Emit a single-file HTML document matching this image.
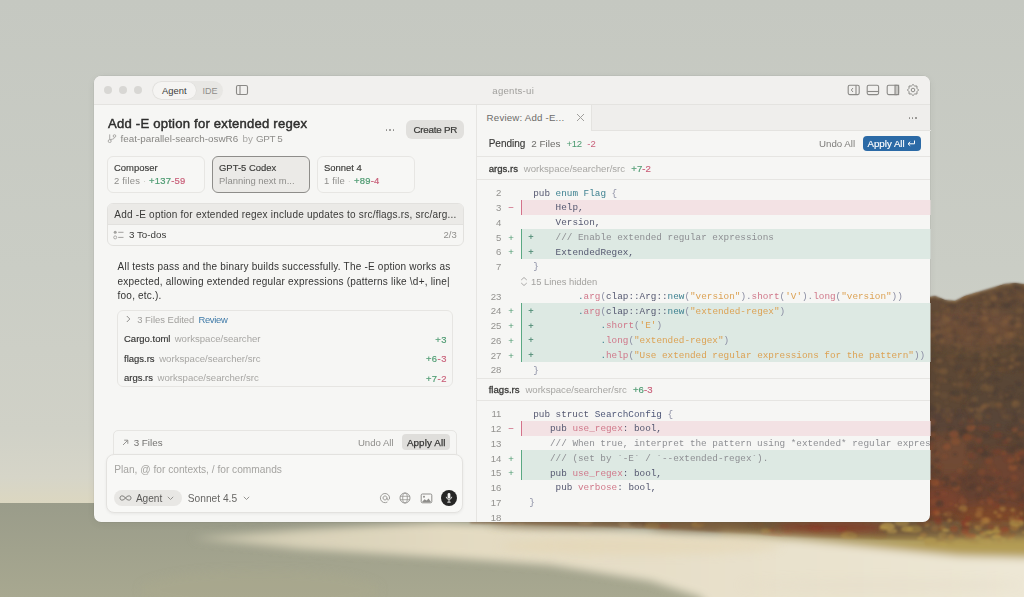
<!DOCTYPE html>
<html><head><meta charset="utf-8"><title>agents-ui</title>
<style>
html,body{margin:0;padding:0;width:1024px;height:597px;overflow:hidden;background:#c9ccc5;}
body{position:relative;font-family:"Liberation Sans", sans-serif;}
.t{position:absolute;white-space:pre;line-height:1;}
.b{position:absolute;}
.win{position:absolute;background:#f6f6f4;border-radius:7px;box-shadow:0 0 0 0.5px rgba(0,0,0,0.08),0 2px 8px rgba(0,0,0,0.06);}
.clip{position:absolute;left:95px;top:76px;width:835.5px;height:446px;border-radius:8px;overflow:hidden;}
</style></head><body>

<svg class="b" style="left:0;top:0" width="1024" height="597" viewBox="0 0 1024 597">
<defs>
<linearGradient id="sky" x1="0" y1="0" x2="0" y2="597" gradientUnits="userSpaceOnUse">
<stop offset="0" stop-color="#c5c8c1"/>
<stop offset="0.45" stop-color="#cacdc5"/>
<stop offset="0.72" stop-color="#d0d1c7"/>
<stop offset="0.8" stop-color="#d6d5c8"/>
<stop offset="0.845" stop-color="#dcd7c0"/>
</linearGradient>
<linearGradient id="gnd" x1="0" y1="503" x2="0" y2="597" gradientUnits="userSpaceOnUse">
<stop offset="0" stop-color="#9a9c8a"/>
<stop offset="0.5" stop-color="#a1a28d"/>
<stop offset="1" stop-color="#a8a890"/>
</linearGradient>
<linearGradient id="tree" x1="0" y1="284" x2="0" y2="545" gradientUnits="userSpaceOnUse">
<stop offset="0" stop-color="#654d38"/>
<stop offset="0.25" stop-color="#5d4836"/>
<stop offset="0.55" stop-color="#5a4537"/>
<stop offset="0.8" stop-color="#654331"/>
<stop offset="1" stop-color="#72452c"/>
</linearGradient>
<linearGradient id="sand" x1="208" y1="0" x2="1024" y2="0" gradientUnits="userSpaceOnUse">
<stop offset="0" stop-color="#c9c5ac"/>
<stop offset="0.12" stop-color="#d8d1b8"/>
<stop offset="0.3" stop-color="#e3dac1"/>
<stop offset="1" stop-color="#ede7d5"/>
</linearGradient>
<clipPath id="treeclip"><polygon points="925,298 935,296 945,300 955,301 965,296 975,293 985,290 995,287 1005,284 1015,283 1030,285 1040,285 1040,560 925,560"/><polygon points="470,521 1040,521 1040,560 950,545 880,540 800,538 740,534 680,530 600,527 520,525 470,524"/></clipPath>
<filter id="bl1" x="-5%" y="-5%" width="110%" height="110%"><feGaussianBlur stdDeviation="1.0"/></filter>
<filter id="bl" x="-5%" y="-5%" width="110%" height="110%"><feGaussianBlur stdDeviation="1.2"/></filter>
<filter id="bl3" x="-20%" y="-50%" width="140%" height="200%"><feGaussianBlur stdDeviation="4.5"/></filter>
<filter id="bl2" x="-50%" y="-50%" width="200%" height="200%"><feGaussianBlur stdDeviation="4"/></filter>
</defs>
<rect x="0" y="0" width="1024" height="597" fill="url(#sky)"/>
<rect x="-20" y="503" width="1064" height="120" fill="url(#gnd)"/>
<g filter="url(#bl)">
<polygon points="925,298 935,296 945,300 955,301 965,296 975,293 985,290 995,287 1005,284 1015,283 1030,285 1040,285 1040,560 925,560" fill="url(#tree)"/>
<polygon points="470,521 930,521 1040,521 1040,545 950,542 880,540 800,538 740,534 680,530 600,527 520,525 470,524" fill="#735a3e"/>
</g>
<g filter="url(#bl2)">
<ellipse cx="975" cy="330" rx="45" ry="22" fill="#74523a" opacity="0.6"/>
<ellipse cx="1000" cy="400" rx="30" ry="30" fill="#56463a" opacity="0.5"/>
<ellipse cx="950" cy="455" rx="25" ry="22" fill="#7d4e33" opacity="0.55"/>
<ellipse cx="1005" cy="470" rx="25" ry="20" fill="#7a4630" opacity="0.5"/>
<ellipse cx="940" cy="500" rx="22" ry="14" fill="#85452c" opacity="0.6"/>
<ellipse cx="990" cy="515" rx="35" ry="12" fill="#8a4a2c" opacity="0.55"/>
<ellipse cx="830" cy="528" rx="55" ry="7" fill="#8c3a28" opacity="0.7"/>
</g>
<g filter="url(#bl1)" clip-path="url(#treeclip)"><ellipse cx="957.0" cy="322.1" rx="3.5" ry="2.8" fill="#7a5a3a" opacity="0.50"/><ellipse cx="932.2" cy="437.0" rx="4.2" ry="3.4" fill="#4f3a2e" opacity="0.26"/><ellipse cx="968.8" cy="300.6" rx="1.8" ry="1.4" fill="#4a3c34" opacity="0.27"/><ellipse cx="983.1" cy="534.0" rx="3.4" ry="2.7" fill="#c09a48" opacity="0.53"/><ellipse cx="984.3" cy="387.5" rx="4.4" ry="3.5" fill="#7a5a3a" opacity="0.42"/><ellipse cx="936.4" cy="393.5" rx="3.1" ry="2.5" fill="#86603c" opacity="0.34"/><ellipse cx="1010.1" cy="330.1" rx="3.2" ry="2.6" fill="#4f3e32" opacity="0.36"/><ellipse cx="981.2" cy="298.7" rx="1.7" ry="1.3" fill="#4f3e32" opacity="0.40"/><ellipse cx="979.4" cy="488.7" rx="2.9" ry="2.3" fill="#9a5530" opacity="0.36"/><ellipse cx="948.8" cy="329.8" rx="3.8" ry="3.1" fill="#7a5a3a" opacity="0.42"/><ellipse cx="978.7" cy="514.8" rx="3.7" ry="3.0" fill="#b07a3a" opacity="0.43"/><ellipse cx="929.9" cy="418.2" rx="2.0" ry="1.6" fill="#6e4e34" opacity="0.30"/><ellipse cx="974.8" cy="292.4" rx="3.5" ry="2.8" fill="#86603c" opacity="0.42"/><ellipse cx="1016.6" cy="365.5" rx="3.6" ry="2.9" fill="#86603c" opacity="0.40"/><ellipse cx="1008.1" cy="300.3" rx="1.8" ry="1.4" fill="#6e4e34" opacity="0.39"/><ellipse cx="993.7" cy="298.1" rx="3.6" ry="2.9" fill="#86603c" opacity="0.55"/><ellipse cx="1010.8" cy="357.7" rx="2.7" ry="2.1" fill="#6e4e34" opacity="0.26"/><ellipse cx="971.9" cy="326.7" rx="1.9" ry="1.5" fill="#7a5a3a" opacity="0.32"/><ellipse cx="953.0" cy="478.4" rx="2.7" ry="2.2" fill="#9a5530" opacity="0.27"/><ellipse cx="970.5" cy="428.2" rx="4.2" ry="3.3" fill="#9a5530" opacity="0.51"/><ellipse cx="952.1" cy="392.5" rx="2.6" ry="2.1" fill="#4a3c34" opacity="0.54"/><ellipse cx="938.3" cy="328.9" rx="2.2" ry="1.8" fill="#4f3e32" opacity="0.25"/><ellipse cx="1011.8" cy="330.5" rx="2.3" ry="1.9" fill="#4f3e32" opacity="0.38"/><ellipse cx="961.9" cy="432.6" rx="4.4" ry="3.5" fill="#4a3a32" opacity="0.54"/><ellipse cx="992.7" cy="478.8" rx="2.9" ry="2.3" fill="#4a3a32" opacity="0.37"/><ellipse cx="965.1" cy="309.5" rx="3.4" ry="2.7" fill="#7a5a3a" opacity="0.31"/><ellipse cx="1028.3" cy="399.2" rx="1.8" ry="1.5" fill="#86603c" opacity="0.27"/><ellipse cx="922.0" cy="322.2" rx="1.8" ry="1.4" fill="#6e4e34" opacity="0.43"/><ellipse cx="929.6" cy="337.3" rx="2.6" ry="2.1" fill="#6e4e34" opacity="0.54"/><ellipse cx="987.0" cy="408.1" rx="1.8" ry="1.5" fill="#4a3c34" opacity="0.55"/><ellipse cx="972.3" cy="410.7" rx="1.8" ry="1.4" fill="#7a5a3a" opacity="0.47"/><ellipse cx="1002.0" cy="409.3" rx="3.6" ry="2.9" fill="#86603c" opacity="0.26"/><ellipse cx="1024.7" cy="422.5" rx="1.9" ry="1.6" fill="#4a3a32" opacity="0.52"/><ellipse cx="1003.9" cy="361.3" rx="3.4" ry="2.7" fill="#7a5a3a" opacity="0.46"/><ellipse cx="950.2" cy="379.5" rx="2.0" ry="1.6" fill="#4f3e32" opacity="0.41"/><ellipse cx="1006.1" cy="369.7" rx="2.2" ry="1.7" fill="#4f3e32" opacity="0.49"/><ellipse cx="1010.4" cy="478.8" rx="2.2" ry="1.7" fill="#4a3a32" opacity="0.40"/><ellipse cx="1000.9" cy="545.2" rx="3.9" ry="3.1" fill="#6a4030" opacity="0.33"/><ellipse cx="996.8" cy="536.4" rx="2.8" ry="2.3" fill="#b07a3a" opacity="0.54"/><ellipse cx="961.4" cy="340.6" rx="2.2" ry="1.7" fill="#4f3e32" opacity="0.35"/><ellipse cx="974.1" cy="544.1" rx="3.3" ry="2.7" fill="#9a4a2c" opacity="0.39"/><ellipse cx="992.5" cy="494.7" rx="1.8" ry="1.4" fill="#8a4a2e" opacity="0.52"/><ellipse cx="1006.5" cy="481.5" rx="2.9" ry="2.3" fill="#4f3a2e" opacity="0.38"/><ellipse cx="990.7" cy="305.1" rx="4.3" ry="3.5" fill="#4a3c34" opacity="0.39"/><ellipse cx="1002.3" cy="304.6" rx="2.0" ry="1.6" fill="#4f3e32" opacity="0.26"/><ellipse cx="985.8" cy="405.8" rx="3.5" ry="2.8" fill="#86603c" opacity="0.50"/><ellipse cx="1027.9" cy="456.8" rx="2.6" ry="2.0" fill="#4a3a32" opacity="0.41"/><ellipse cx="924.3" cy="494.6" rx="3.7" ry="2.9" fill="#8a4a2e" opacity="0.41"/><ellipse cx="1022.8" cy="397.4" rx="4.1" ry="3.3" fill="#4f3e32" opacity="0.26"/><ellipse cx="945.0" cy="415.3" rx="3.8" ry="3.0" fill="#6e4e34" opacity="0.33"/><ellipse cx="967.3" cy="316.9" rx="4.2" ry="3.4" fill="#6e4e34" opacity="0.52"/><ellipse cx="993.5" cy="498.8" rx="3.1" ry="2.4" fill="#4a3a32" opacity="0.29"/><ellipse cx="938.4" cy="417.8" rx="4.1" ry="3.3" fill="#4f3e32" opacity="0.43"/><ellipse cx="1005.8" cy="321.8" rx="1.9" ry="1.5" fill="#86603c" opacity="0.47"/><ellipse cx="982.1" cy="368.7" rx="3.1" ry="2.4" fill="#86603c" opacity="0.39"/><ellipse cx="1005.9" cy="516.9" rx="1.7" ry="1.3" fill="#8c3a28" opacity="0.33"/><ellipse cx="1005.4" cy="417.1" rx="3.2" ry="2.5" fill="#7a5a3a" opacity="0.38"/><ellipse cx="988.2" cy="416.5" rx="3.0" ry="2.4" fill="#6e4e34" opacity="0.39"/><ellipse cx="979.6" cy="409.2" rx="4.3" ry="3.5" fill="#86603c" opacity="0.51"/><ellipse cx="1023.8" cy="351.1" rx="3.2" ry="2.5" fill="#4f3e32" opacity="0.50"/><ellipse cx="936.8" cy="314.4" rx="2.8" ry="2.3" fill="#7a5a3a" opacity="0.45"/><ellipse cx="968.3" cy="338.6" rx="2.4" ry="1.9" fill="#7a5a3a" opacity="0.52"/><ellipse cx="938.7" cy="472.5" rx="3.5" ry="2.8" fill="#4f3a2e" opacity="0.33"/><ellipse cx="936.8" cy="406.4" rx="3.7" ry="3.0" fill="#7a5a3a" opacity="0.37"/><ellipse cx="974.6" cy="545.3" rx="4.0" ry="3.2" fill="#8c3a28" opacity="0.46"/><ellipse cx="1029.4" cy="389.4" rx="2.8" ry="2.2" fill="#6e4e34" opacity="0.35"/><ellipse cx="1000.0" cy="287.2" rx="3.2" ry="2.5" fill="#4a3c34" opacity="0.46"/><ellipse cx="963.5" cy="419.6" rx="2.4" ry="1.9" fill="#7a5a3a" opacity="0.28"/><ellipse cx="1021.2" cy="342.8" rx="4.1" ry="3.3" fill="#7a5a3a" opacity="0.33"/><ellipse cx="926.3" cy="489.2" rx="2.3" ry="1.8" fill="#4f3a2e" opacity="0.50"/><ellipse cx="1013.8" cy="461.8" rx="4.3" ry="3.5" fill="#9a5530" opacity="0.29"/><ellipse cx="1021.3" cy="433.8" rx="3.6" ry="2.9" fill="#8a4a2e" opacity="0.33"/><ellipse cx="1008.4" cy="330.8" rx="4.2" ry="3.3" fill="#6e4e34" opacity="0.53"/><ellipse cx="990.5" cy="495.2" rx="1.8" ry="1.4" fill="#4f3a2e" opacity="0.27"/><ellipse cx="1015.2" cy="402.7" rx="2.5" ry="2.0" fill="#86603c" opacity="0.38"/><ellipse cx="1020.9" cy="447.4" rx="1.6" ry="1.3" fill="#4f3a2e" opacity="0.53"/><ellipse cx="1026.7" cy="351.7" rx="2.0" ry="1.6" fill="#6e4e34" opacity="0.44"/><ellipse cx="979.4" cy="336.8" rx="2.8" ry="2.3" fill="#4f3e32" opacity="0.33"/><ellipse cx="1008.8" cy="546.5" rx="1.6" ry="1.3" fill="#9a4a2c" opacity="0.47"/><ellipse cx="981.5" cy="332.4" rx="2.9" ry="2.3" fill="#4a3c34" opacity="0.28"/><ellipse cx="1010.4" cy="397.0" rx="3.0" ry="2.4" fill="#4a3c34" opacity="0.54"/><ellipse cx="955.2" cy="339.2" rx="2.2" ry="1.8" fill="#4f3e32" opacity="0.50"/><ellipse cx="998.3" cy="451.2" rx="2.7" ry="2.2" fill="#7a402c" opacity="0.54"/><ellipse cx="1012.4" cy="285.8" rx="3.4" ry="2.7" fill="#6e4e34" opacity="0.38"/><ellipse cx="928.0" cy="459.0" rx="2.6" ry="2.1" fill="#4a3a32" opacity="0.45"/><ellipse cx="952.4" cy="346.4" rx="2.4" ry="1.9" fill="#4a3c34" opacity="0.31"/><ellipse cx="951.1" cy="283.0" rx="2.6" ry="2.1" fill="#6e4e34" opacity="0.54"/><ellipse cx="981.1" cy="347.0" rx="4.4" ry="3.5" fill="#6e4e34" opacity="0.32"/><ellipse cx="941.8" cy="371.2" rx="1.8" ry="1.4" fill="#6e4e34" opacity="0.40"/><ellipse cx="943.7" cy="416.3" rx="1.5" ry="1.2" fill="#6e4e34" opacity="0.50"/><ellipse cx="937.5" cy="438.1" rx="2.7" ry="2.1" fill="#7a402c" opacity="0.34"/><ellipse cx="947.1" cy="437.8" rx="3.1" ry="2.5" fill="#4f3a2e" opacity="0.45"/><ellipse cx="999.3" cy="515.8" rx="2.7" ry="2.1" fill="#b07a3a" opacity="0.47"/><ellipse cx="975.4" cy="357.6" rx="3.4" ry="2.7" fill="#4f3e32" opacity="0.26"/><ellipse cx="1012.2" cy="519.3" rx="3.4" ry="2.7" fill="#c09a48" opacity="0.29"/><ellipse cx="978.6" cy="416.2" rx="4.0" ry="3.2" fill="#7a5a3a" opacity="0.50"/><ellipse cx="985.1" cy="519.5" rx="3.5" ry="2.8" fill="#8c3a28" opacity="0.28"/><ellipse cx="926.5" cy="451.5" rx="4.4" ry="3.5" fill="#9a5530" opacity="0.50"/><ellipse cx="982.3" cy="449.0" rx="3.4" ry="2.7" fill="#4f3a2e" opacity="0.40"/><ellipse cx="922.4" cy="494.2" rx="3.7" ry="3.0" fill="#4a3a32" opacity="0.52"/><ellipse cx="931.9" cy="421.9" rx="3.7" ry="3.0" fill="#9a5530" opacity="0.33"/><ellipse cx="930.0" cy="352.6" rx="3.7" ry="3.0" fill="#4f3e32" opacity="0.32"/><ellipse cx="992.2" cy="404.5" rx="4.0" ry="3.2" fill="#7a5a3a" opacity="0.39"/><ellipse cx="995.8" cy="486.0" rx="3.4" ry="2.7" fill="#4f3a2e" opacity="0.27"/><ellipse cx="937.9" cy="349.5" rx="3.7" ry="3.0" fill="#6e4e34" opacity="0.44"/><ellipse cx="936.4" cy="410.3" rx="3.0" ry="2.4" fill="#7a5a3a" opacity="0.46"/><ellipse cx="995.0" cy="359.4" rx="3.0" ry="2.4" fill="#4a3c34" opacity="0.39"/><ellipse cx="1004.9" cy="546.2" rx="3.1" ry="2.5" fill="#b07a3a" opacity="0.54"/><ellipse cx="1023.1" cy="286.7" rx="2.9" ry="2.3" fill="#86603c" opacity="0.54"/><ellipse cx="970.5" cy="353.5" rx="2.1" ry="1.7" fill="#4f3e32" opacity="0.27"/><ellipse cx="931.8" cy="480.8" rx="2.3" ry="1.8" fill="#7a402c" opacity="0.29"/><ellipse cx="1010.6" cy="417.3" rx="4.2" ry="3.3" fill="#6e4e34" opacity="0.32"/><ellipse cx="1019.0" cy="411.3" rx="1.6" ry="1.3" fill="#7a5a3a" opacity="0.53"/><ellipse cx="995.6" cy="389.8" rx="3.7" ry="2.9" fill="#4a3c34" opacity="0.35"/><ellipse cx="956.1" cy="505.5" rx="1.5" ry="1.2" fill="#b07a3a" opacity="0.50"/><ellipse cx="935.0" cy="528.4" rx="3.6" ry="2.9" fill="#b07a3a" opacity="0.33"/><ellipse cx="929.0" cy="385.8" rx="4.1" ry="3.3" fill="#7a5a3a" opacity="0.36"/><ellipse cx="968.2" cy="355.2" rx="1.6" ry="1.3" fill="#7a5a3a" opacity="0.27"/><ellipse cx="993.5" cy="450.9" rx="1.9" ry="1.6" fill="#7a402c" opacity="0.38"/><ellipse cx="956.1" cy="487.7" rx="3.9" ry="3.1" fill="#9a5530" opacity="0.52"/><ellipse cx="1009.7" cy="449.8" rx="4.2" ry="3.4" fill="#4a3a32" opacity="0.41"/><ellipse cx="999.7" cy="295.2" rx="3.7" ry="3.0" fill="#4a3c34" opacity="0.43"/><ellipse cx="937.0" cy="513.3" rx="3.0" ry="2.4" fill="#c09a48" opacity="0.29"/><ellipse cx="973.0" cy="373.4" rx="2.4" ry="1.9" fill="#6e4e34" opacity="0.37"/><ellipse cx="947.8" cy="410.5" rx="3.5" ry="2.8" fill="#7a5a3a" opacity="0.30"/><ellipse cx="939.5" cy="337.3" rx="4.2" ry="3.4" fill="#4a3c34" opacity="0.42"/><ellipse cx="970.9" cy="370.5" rx="3.8" ry="3.0" fill="#4a3c34" opacity="0.29"/><ellipse cx="942.8" cy="306.1" rx="2.5" ry="2.0" fill="#7a5a3a" opacity="0.35"/><ellipse cx="961.8" cy="497.3" rx="2.1" ry="1.7" fill="#8a4a2e" opacity="0.47"/><ellipse cx="966.6" cy="392.1" rx="3.1" ry="2.5" fill="#4a3c34" opacity="0.33"/><ellipse cx="1003.2" cy="414.5" rx="3.2" ry="2.6" fill="#6e4e34" opacity="0.29"/><ellipse cx="976.4" cy="449.5" rx="4.1" ry="3.3" fill="#4f3a2e" opacity="0.28"/><ellipse cx="1018.9" cy="384.3" rx="3.4" ry="2.7" fill="#4a3c34" opacity="0.54"/><ellipse cx="1013.7" cy="514.2" rx="1.6" ry="1.3" fill="#9a4a2c" opacity="0.38"/><ellipse cx="1004.5" cy="495.9" rx="4.4" ry="3.5" fill="#9a5530" opacity="0.25"/><ellipse cx="964.3" cy="528.5" rx="4.0" ry="3.2" fill="#6a4030" opacity="0.54"/><ellipse cx="948.8" cy="311.0" rx="2.0" ry="1.6" fill="#86603c" opacity="0.54"/><ellipse cx="933.8" cy="501.6" rx="3.6" ry="2.9" fill="#9a5530" opacity="0.28"/><ellipse cx="1005.9" cy="282.4" rx="1.9" ry="1.5" fill="#86603c" opacity="0.53"/><ellipse cx="991.7" cy="362.8" rx="1.9" ry="1.5" fill="#6e4e34" opacity="0.41"/><ellipse cx="969.2" cy="485.2" rx="1.8" ry="1.4" fill="#7a402c" opacity="0.41"/><ellipse cx="985.0" cy="385.2" rx="2.2" ry="1.7" fill="#86603c" opacity="0.25"/><ellipse cx="980.0" cy="547.0" rx="2.3" ry="1.9" fill="#b07a3a" opacity="0.44"/><ellipse cx="1017.4" cy="408.4" rx="2.2" ry="1.8" fill="#4f3e32" opacity="0.26"/><ellipse cx="966.5" cy="454.8" rx="1.7" ry="1.3" fill="#4f3a2e" opacity="0.40"/><ellipse cx="994.8" cy="393.7" rx="2.3" ry="1.8" fill="#4a3c34" opacity="0.53"/><ellipse cx="946.5" cy="291.1" rx="2.5" ry="2.0" fill="#4a3c34" opacity="0.36"/><ellipse cx="964.8" cy="283.8" rx="2.4" ry="1.9" fill="#86603c" opacity="0.27"/><ellipse cx="975.5" cy="335.3" rx="3.8" ry="3.0" fill="#4f3e32" opacity="0.32"/><ellipse cx="945.9" cy="484.3" rx="2.4" ry="1.9" fill="#4a3a32" opacity="0.40"/><ellipse cx="942.2" cy="341.4" rx="2.8" ry="2.2" fill="#7a5a3a" opacity="0.53"/><ellipse cx="937.8" cy="386.7" rx="2.1" ry="1.7" fill="#86603c" opacity="0.29"/><ellipse cx="927.6" cy="298.0" rx="2.7" ry="2.1" fill="#6e4e34" opacity="0.47"/><ellipse cx="1029.7" cy="529.8" rx="2.5" ry="2.0" fill="#8c3a28" opacity="0.45"/><ellipse cx="978.7" cy="406.4" rx="2.4" ry="1.9" fill="#4a3c34" opacity="0.50"/><ellipse cx="1028.4" cy="399.7" rx="1.8" ry="1.5" fill="#7a5a3a" opacity="0.33"/><ellipse cx="960.0" cy="536.2" rx="1.9" ry="1.5" fill="#8c3a28" opacity="0.36"/><ellipse cx="1005.0" cy="364.1" rx="3.9" ry="3.1" fill="#7a5a3a" opacity="0.26"/><ellipse cx="973.1" cy="381.1" rx="4.3" ry="3.4" fill="#4f3e32" opacity="0.35"/><ellipse cx="1001.6" cy="408.2" rx="3.4" ry="2.7" fill="#4f3e32" opacity="0.49"/><ellipse cx="1004.8" cy="292.8" rx="1.6" ry="1.3" fill="#7a5a3a" opacity="0.49"/><ellipse cx="928.7" cy="333.9" rx="1.7" ry="1.4" fill="#86603c" opacity="0.35"/><ellipse cx="951.4" cy="536.7" rx="3.4" ry="2.7" fill="#b07a3a" opacity="0.47"/><ellipse cx="996.5" cy="527.8" rx="2.4" ry="1.9" fill="#c09a48" opacity="0.52"/><ellipse cx="990.5" cy="532.9" rx="1.6" ry="1.3" fill="#8c3a28" opacity="0.28"/><ellipse cx="999.3" cy="405.9" rx="3.8" ry="3.1" fill="#6e4e34" opacity="0.52"/><ellipse cx="1010.0" cy="317.3" rx="3.0" ry="2.4" fill="#7a5a3a" opacity="0.49"/><ellipse cx="1001.8" cy="500.9" rx="3.8" ry="3.1" fill="#4a3a32" opacity="0.32"/><ellipse cx="1015.0" cy="404.6" rx="3.9" ry="3.1" fill="#86603c" opacity="0.27"/><ellipse cx="943.3" cy="482.3" rx="2.2" ry="1.8" fill="#8a4a2e" opacity="0.44"/><ellipse cx="974.0" cy="426.9" rx="2.0" ry="1.6" fill="#9a5530" opacity="0.52"/><ellipse cx="1028.7" cy="352.5" rx="1.8" ry="1.4" fill="#7a5a3a" opacity="0.38"/><ellipse cx="1028.8" cy="540.6" rx="2.0" ry="1.6" fill="#8c3a28" opacity="0.38"/><ellipse cx="989.0" cy="461.3" rx="3.7" ry="3.0" fill="#8a4a2e" opacity="0.48"/><ellipse cx="953.7" cy="356.3" rx="2.3" ry="1.8" fill="#6e4e34" opacity="0.47"/><ellipse cx="943.5" cy="347.8" rx="2.2" ry="1.8" fill="#4f3e32" opacity="0.33"/><ellipse cx="1020.0" cy="332.1" rx="1.7" ry="1.4" fill="#6e4e34" opacity="0.55"/><ellipse cx="976.8" cy="343.5" rx="3.9" ry="3.1" fill="#4a3c34" opacity="0.55"/><ellipse cx="933.1" cy="408.3" rx="4.0" ry="3.2" fill="#4a3c34" opacity="0.52"/><ellipse cx="926.4" cy="360.1" rx="1.9" ry="1.5" fill="#4f3e32" opacity="0.43"/><ellipse cx="1011.4" cy="333.6" rx="1.7" ry="1.4" fill="#86603c" opacity="0.51"/><ellipse cx="970.5" cy="351.1" rx="3.8" ry="3.1" fill="#7a5a3a" opacity="0.28"/><ellipse cx="986.4" cy="446.9" rx="2.2" ry="1.7" fill="#7a402c" opacity="0.35"/><ellipse cx="926.8" cy="548.0" rx="1.6" ry="1.3" fill="#8c3a28" opacity="0.49"/><ellipse cx="1010.4" cy="390.8" rx="2.6" ry="2.1" fill="#86603c" opacity="0.34"/><ellipse cx="944.0" cy="493.5" rx="3.1" ry="2.5" fill="#8a4a2e" opacity="0.37"/><ellipse cx="1008.0" cy="458.6" rx="2.0" ry="1.6" fill="#4a3a32" opacity="0.28"/><ellipse cx="939.7" cy="467.0" rx="2.7" ry="2.2" fill="#7a402c" opacity="0.45"/><ellipse cx="967.1" cy="295.7" rx="3.7" ry="3.0" fill="#6e4e34" opacity="0.37"/><ellipse cx="924.0" cy="485.9" rx="3.9" ry="3.1" fill="#4f3a2e" opacity="0.37"/><ellipse cx="965.7" cy="532.6" rx="2.8" ry="2.2" fill="#8c3a28" opacity="0.38"/><ellipse cx="1010.6" cy="390.1" rx="4.1" ry="3.3" fill="#4a3c34" opacity="0.48"/><ellipse cx="936.0" cy="295.8" rx="1.9" ry="1.5" fill="#4a3c34" opacity="0.28"/><ellipse cx="989.2" cy="380.6" rx="3.0" ry="2.4" fill="#4f3e32" opacity="0.35"/><ellipse cx="939.5" cy="327.7" rx="1.7" ry="1.4" fill="#4a3c34" opacity="0.40"/><ellipse cx="1008.9" cy="539.2" rx="2.1" ry="1.7" fill="#8c3a28" opacity="0.50"/><ellipse cx="926.7" cy="524.8" rx="2.4" ry="2.0" fill="#c09a48" opacity="0.53"/><ellipse cx="963.9" cy="522.5" rx="3.4" ry="2.7" fill="#8c3a28" opacity="0.44"/><ellipse cx="1014.5" cy="447.2" rx="3.3" ry="2.7" fill="#4f3a2e" opacity="0.50"/><ellipse cx="941.8" cy="340.0" rx="2.7" ry="2.2" fill="#86603c" opacity="0.30"/><ellipse cx="960.8" cy="321.8" rx="4.4" ry="3.5" fill="#4f3e32" opacity="0.26"/><ellipse cx="982.7" cy="483.5" rx="1.6" ry="1.3" fill="#7a402c" opacity="0.29"/><ellipse cx="986.7" cy="428.3" rx="3.4" ry="2.7" fill="#7a402c" opacity="0.44"/><ellipse cx="955.3" cy="348.3" rx="2.7" ry="2.1" fill="#6e4e34" opacity="0.38"/><ellipse cx="969.3" cy="288.2" rx="3.4" ry="2.7" fill="#4a3c34" opacity="0.39"/><ellipse cx="970.3" cy="446.5" rx="4.0" ry="3.2" fill="#4f3a2e" opacity="0.49"/><ellipse cx="965.2" cy="299.9" rx="2.6" ry="2.1" fill="#6e4e34" opacity="0.28"/><ellipse cx="969.7" cy="417.7" rx="1.6" ry="1.3" fill="#4f3e32" opacity="0.27"/><ellipse cx="1001.2" cy="488.9" rx="3.0" ry="2.4" fill="#8a4a2e" opacity="0.48"/><ellipse cx="1018.6" cy="455.6" rx="3.9" ry="3.1" fill="#8a4a2e" opacity="0.51"/><ellipse cx="1029.6" cy="476.7" rx="3.9" ry="3.2" fill="#4f3a2e" opacity="0.29"/><ellipse cx="1017.7" cy="358.6" rx="3.9" ry="3.1" fill="#4f3e32" opacity="0.46"/><ellipse cx="999.9" cy="340.8" rx="4.0" ry="3.2" fill="#86603c" opacity="0.48"/><ellipse cx="939.1" cy="520.5" rx="2.3" ry="1.9" fill="#6a4030" opacity="0.29"/><ellipse cx="976.2" cy="526.7" rx="2.1" ry="1.7" fill="#b07a3a" opacity="0.43"/><ellipse cx="947.6" cy="381.0" rx="2.1" ry="1.7" fill="#4a3c34" opacity="0.30"/><ellipse cx="1023.1" cy="462.8" rx="4.2" ry="3.3" fill="#4f3a2e" opacity="0.49"/><ellipse cx="950.5" cy="486.4" rx="1.6" ry="1.3" fill="#7a402c" opacity="0.54"/><ellipse cx="970.9" cy="420.7" rx="3.6" ry="2.9" fill="#8a4a2e" opacity="0.33"/><ellipse cx="979.9" cy="509.9" rx="3.7" ry="3.0" fill="#b07a3a" opacity="0.33"/><ellipse cx="1029.0" cy="435.6" rx="2.6" ry="2.1" fill="#8a4a2e" opacity="0.38"/><ellipse cx="941.1" cy="479.8" rx="1.6" ry="1.3" fill="#4a3a32" opacity="0.33"/><ellipse cx="991.0" cy="543.8" rx="3.3" ry="2.6" fill="#b07a3a" opacity="0.47"/><ellipse cx="1002.7" cy="341.0" rx="2.4" ry="1.9" fill="#4a3c34" opacity="0.38"/><ellipse cx="961.3" cy="294.7" rx="3.0" ry="2.4" fill="#86603c" opacity="0.45"/><ellipse cx="924.4" cy="282.7" rx="2.6" ry="2.1" fill="#7a5a3a" opacity="0.41"/><ellipse cx="979.7" cy="391.9" rx="2.4" ry="1.9" fill="#4f3e32" opacity="0.31"/><ellipse cx="989.4" cy="408.3" rx="1.9" ry="1.5" fill="#4f3e32" opacity="0.46"/><ellipse cx="970.7" cy="298.9" rx="1.9" ry="1.5" fill="#6e4e34" opacity="0.37"/><ellipse cx="950.5" cy="285.1" rx="3.4" ry="2.7" fill="#86603c" opacity="0.52"/><ellipse cx="986.2" cy="435.9" rx="3.3" ry="2.6" fill="#4a3a32" opacity="0.47"/><ellipse cx="948.8" cy="522.3" rx="1.6" ry="1.3" fill="#c09a48" opacity="0.26"/><ellipse cx="942.1" cy="324.4" rx="4.2" ry="3.4" fill="#7a5a3a" opacity="0.25"/><ellipse cx="981.5" cy="532.3" rx="1.9" ry="1.5" fill="#8c3a28" opacity="0.41"/><ellipse cx="991.4" cy="454.3" rx="2.7" ry="2.2" fill="#4a3a32" opacity="0.30"/><ellipse cx="955.4" cy="361.9" rx="1.6" ry="1.3" fill="#4a3c34" opacity="0.46"/><ellipse cx="922.7" cy="506.6" rx="3.7" ry="3.0" fill="#6a4030" opacity="0.27"/><ellipse cx="992.8" cy="328.7" rx="4.5" ry="3.6" fill="#6e4e34" opacity="0.32"/><ellipse cx="926.2" cy="371.2" rx="3.7" ry="3.0" fill="#6e4e34" opacity="0.46"/><ellipse cx="950.7" cy="429.3" rx="2.8" ry="2.2" fill="#4a3a32" opacity="0.54"/><ellipse cx="953.9" cy="529.0" rx="4.2" ry="3.3" fill="#9a4a2c" opacity="0.51"/><ellipse cx="923.6" cy="351.3" rx="2.2" ry="1.8" fill="#4f3e32" opacity="0.53"/><ellipse cx="1002.6" cy="368.9" rx="4.1" ry="3.3" fill="#6e4e34" opacity="0.43"/><ellipse cx="963.0" cy="508.6" rx="4.3" ry="3.4" fill="#c09a48" opacity="0.39"/><ellipse cx="1012.7" cy="467.6" rx="4.1" ry="3.3" fill="#9a5530" opacity="0.54"/><ellipse cx="947.3" cy="517.3" rx="3.9" ry="3.1" fill="#6a4030" opacity="0.44"/><ellipse cx="930.4" cy="524.3" rx="1.9" ry="1.5" fill="#9a4a2c" opacity="0.28"/><ellipse cx="989.2" cy="325.0" rx="4.4" ry="3.5" fill="#7a5a3a" opacity="0.26"/><ellipse cx="936.9" cy="453.2" rx="1.6" ry="1.3" fill="#8a4a2e" opacity="0.47"/><ellipse cx="929.1" cy="439.1" rx="2.6" ry="2.1" fill="#4a3a32" opacity="0.52"/><ellipse cx="929.1" cy="512.8" rx="4.2" ry="3.4" fill="#6a4030" opacity="0.28"/><ellipse cx="944.2" cy="311.8" rx="1.6" ry="1.3" fill="#7a5a3a" opacity="0.50"/><ellipse cx="990.2" cy="358.4" rx="1.8" ry="1.4" fill="#7a5a3a" opacity="0.49"/><ellipse cx="991.8" cy="360.3" rx="2.5" ry="2.0" fill="#6e4e34" opacity="0.26"/><ellipse cx="949.7" cy="357.2" rx="3.6" ry="2.9" fill="#6e4e34" opacity="0.52"/><ellipse cx="1005.1" cy="442.1" rx="2.9" ry="2.3" fill="#7a402c" opacity="0.44"/><ellipse cx="925.3" cy="391.8" rx="2.8" ry="2.2" fill="#7a5a3a" opacity="0.35"/><ellipse cx="998.1" cy="425.1" rx="2.1" ry="1.7" fill="#8a4a2e" opacity="0.42"/><ellipse cx="953.0" cy="398.0" rx="3.1" ry="2.5" fill="#6e4e34" opacity="0.48"/><ellipse cx="1027.6" cy="283.2" rx="3.0" ry="2.4" fill="#4a3c34" opacity="0.46"/><ellipse cx="1011.1" cy="539.3" rx="3.3" ry="2.6" fill="#c09a48" opacity="0.33"/><ellipse cx="1023.9" cy="357.5" rx="2.1" ry="1.7" fill="#4f3e32" opacity="0.40"/><ellipse cx="933.9" cy="451.3" rx="1.7" ry="1.4" fill="#4a3a32" opacity="0.49"/><ellipse cx="989.8" cy="376.6" rx="2.7" ry="2.2" fill="#4a3c34" opacity="0.52"/><ellipse cx="1002.5" cy="394.3" rx="3.4" ry="2.8" fill="#6e4e34" opacity="0.31"/><ellipse cx="950.4" cy="521.7" rx="3.0" ry="2.4" fill="#6a4030" opacity="0.54"/><ellipse cx="990.1" cy="533.1" rx="1.9" ry="1.5" fill="#c09a48" opacity="0.48"/><ellipse cx="1003.3" cy="453.9" rx="2.5" ry="2.0" fill="#7a402c" opacity="0.41"/><ellipse cx="1015.7" cy="401.8" rx="3.2" ry="2.5" fill="#6e4e34" opacity="0.30"/><ellipse cx="969.4" cy="487.7" rx="3.2" ry="2.6" fill="#4f3a2e" opacity="0.35"/><ellipse cx="991.4" cy="467.3" rx="3.0" ry="2.4" fill="#7a402c" opacity="0.34"/><ellipse cx="997.9" cy="506.4" rx="2.0" ry="1.6" fill="#8c3a28" opacity="0.54"/><ellipse cx="1000.1" cy="442.4" rx="2.5" ry="2.0" fill="#4f3a2e" opacity="0.35"/><ellipse cx="942.4" cy="541.4" rx="3.7" ry="2.9" fill="#9a4a2c" opacity="0.30"/><ellipse cx="993.1" cy="334.0" rx="2.0" ry="1.6" fill="#4f3e32" opacity="0.49"/><ellipse cx="1001.2" cy="397.7" rx="2.1" ry="1.7" fill="#7a5a3a" opacity="0.33"/><ellipse cx="1017.6" cy="405.4" rx="1.5" ry="1.2" fill="#4a3c34" opacity="0.46"/><ellipse cx="976.1" cy="450.2" rx="2.9" ry="2.3" fill="#4f3a2e" opacity="0.33"/><ellipse cx="1001.7" cy="283.5" rx="2.2" ry="1.8" fill="#4a3c34" opacity="0.46"/><ellipse cx="985.4" cy="454.2" rx="4.0" ry="3.2" fill="#4a3a32" opacity="0.51"/><ellipse cx="995.4" cy="452.6" rx="2.9" ry="2.3" fill="#7a402c" opacity="0.33"/><ellipse cx="997.7" cy="520.0" rx="2.2" ry="1.8" fill="#6a4030" opacity="0.46"/><ellipse cx="990.0" cy="348.5" rx="2.8" ry="2.2" fill="#4a3c34" opacity="0.26"/><ellipse cx="1014.7" cy="419.9" rx="3.5" ry="2.8" fill="#4f3e32" opacity="0.52"/><ellipse cx="957.4" cy="284.8" rx="4.0" ry="3.2" fill="#7a5a3a" opacity="0.26"/><ellipse cx="980.7" cy="324.8" rx="3.8" ry="3.1" fill="#4f3e32" opacity="0.41"/><ellipse cx="932.9" cy="434.8" rx="3.1" ry="2.5" fill="#9a5530" opacity="0.40"/><ellipse cx="991.0" cy="502.5" rx="3.1" ry="2.5" fill="#9a5530" opacity="0.47"/><ellipse cx="971.3" cy="545.4" rx="2.1" ry="1.6" fill="#c09a48" opacity="0.48"/><ellipse cx="935.2" cy="543.9" rx="2.6" ry="2.1" fill="#9a4a2c" opacity="0.33"/><ellipse cx="963.2" cy="298.4" rx="1.7" ry="1.4" fill="#4a3c34" opacity="0.44"/><ellipse cx="994.9" cy="436.3" rx="1.8" ry="1.5" fill="#7a402c" opacity="0.47"/><ellipse cx="1023.5" cy="422.2" rx="2.2" ry="1.7" fill="#9a5530" opacity="0.39"/><ellipse cx="939.8" cy="529.2" rx="1.7" ry="1.4" fill="#8c3a28" opacity="0.39"/><ellipse cx="982.7" cy="342.1" rx="4.4" ry="3.5" fill="#6e4e34" opacity="0.45"/><ellipse cx="1011.7" cy="493.5" rx="2.7" ry="2.2" fill="#7a402c" opacity="0.48"/><ellipse cx="992.2" cy="489.4" rx="2.9" ry="2.3" fill="#4f3a2e" opacity="0.33"/><ellipse cx="962.6" cy="349.4" rx="2.8" ry="2.2" fill="#4f3e32" opacity="0.39"/><ellipse cx="1009.0" cy="494.5" rx="2.6" ry="2.1" fill="#7a402c" opacity="0.35"/><ellipse cx="974.4" cy="447.8" rx="1.8" ry="1.4" fill="#7a402c" opacity="0.30"/><ellipse cx="954.7" cy="384.4" rx="1.8" ry="1.4" fill="#86603c" opacity="0.52"/><ellipse cx="1006.7" cy="319.3" rx="4.0" ry="3.2" fill="#86603c" opacity="0.25"/><ellipse cx="923.2" cy="535.2" rx="3.5" ry="2.8" fill="#b07a3a" opacity="0.43"/><ellipse cx="984.5" cy="509.2" rx="2.1" ry="1.6" fill="#6a4030" opacity="0.35"/><ellipse cx="938.5" cy="522.5" rx="3.9" ry="3.1" fill="#8c3a28" opacity="0.43"/><ellipse cx="996.3" cy="541.9" rx="1.8" ry="1.4" fill="#c09a48" opacity="0.49"/><ellipse cx="1012.6" cy="334.5" rx="3.6" ry="2.9" fill="#86603c" opacity="0.27"/><ellipse cx="1012.6" cy="460.5" rx="1.9" ry="1.5" fill="#8a4a2e" opacity="0.33"/><ellipse cx="947.3" cy="319.1" rx="3.0" ry="2.4" fill="#7a5a3a" opacity="0.40"/><ellipse cx="1019.8" cy="468.3" rx="2.2" ry="1.8" fill="#4f3a2e" opacity="0.41"/><ellipse cx="1015.2" cy="283.8" rx="4.0" ry="3.2" fill="#4a3c34" opacity="0.46"/><ellipse cx="975.7" cy="361.0" rx="2.9" ry="2.3" fill="#4a3c34" opacity="0.38"/><ellipse cx="1025.7" cy="302.1" rx="3.4" ry="2.7" fill="#7a5a3a" opacity="0.26"/><ellipse cx="927.0" cy="477.9" rx="4.5" ry="3.6" fill="#8a4a2e" opacity="0.40"/><ellipse cx="974.3" cy="520.8" rx="1.6" ry="1.3" fill="#6a4030" opacity="0.44"/><ellipse cx="958.6" cy="511.2" rx="2.6" ry="2.1" fill="#6a4030" opacity="0.48"/><ellipse cx="981.8" cy="524.7" rx="2.4" ry="1.9" fill="#b07a3a" opacity="0.38"/><ellipse cx="981.8" cy="501.9" rx="2.4" ry="1.9" fill="#9a5530" opacity="0.37"/><ellipse cx="976.4" cy="354.3" rx="3.0" ry="2.4" fill="#4f3e32" opacity="0.45"/><ellipse cx="1007.5" cy="370.0" rx="2.5" ry="2.0" fill="#6e4e34" opacity="0.29"/><ellipse cx="1027.1" cy="305.3" rx="4.5" ry="3.6" fill="#4a3c34" opacity="0.47"/><ellipse cx="1017.6" cy="427.1" rx="1.6" ry="1.3" fill="#7a402c" opacity="0.28"/><ellipse cx="927.0" cy="500.6" rx="2.9" ry="2.3" fill="#8a4a2e" opacity="0.49"/><ellipse cx="1020.3" cy="444.7" rx="3.4" ry="2.7" fill="#4a3a32" opacity="0.51"/><ellipse cx="931.0" cy="292.5" rx="3.4" ry="2.7" fill="#4f3e32" opacity="0.28"/><ellipse cx="941.6" cy="291.8" rx="3.8" ry="3.1" fill="#7a5a3a" opacity="0.36"/><ellipse cx="1010.8" cy="491.2" rx="3.2" ry="2.5" fill="#7a402c" opacity="0.51"/><ellipse cx="942.0" cy="291.1" rx="1.6" ry="1.2" fill="#86603c" opacity="0.44"/><ellipse cx="1022.9" cy="296.5" rx="3.2" ry="2.6" fill="#7a5a3a" opacity="0.50"/><ellipse cx="1005.6" cy="394.0" rx="3.6" ry="2.9" fill="#4a3c34" opacity="0.38"/><ellipse cx="923.5" cy="385.0" rx="3.3" ry="2.6" fill="#4f3e32" opacity="0.39"/><ellipse cx="966.5" cy="309.1" rx="3.4" ry="2.7" fill="#4f3e32" opacity="0.52"/><ellipse cx="989.7" cy="395.6" rx="1.5" ry="1.2" fill="#7a5a3a" opacity="0.55"/><ellipse cx="1014.7" cy="340.1" rx="1.9" ry="1.5" fill="#4a3c34" opacity="0.26"/><ellipse cx="999.7" cy="346.4" rx="3.7" ry="3.0" fill="#4f3e32" opacity="0.53"/><ellipse cx="961.5" cy="480.8" rx="3.6" ry="2.9" fill="#4f3a2e" opacity="0.47"/><ellipse cx="931.1" cy="449.2" rx="3.6" ry="2.9" fill="#9a5530" opacity="0.45"/><ellipse cx="1018.1" cy="525.0" rx="1.7" ry="1.3" fill="#9a4a2c" opacity="0.25"/><ellipse cx="923.6" cy="455.1" rx="4.0" ry="3.2" fill="#8a4a2e" opacity="0.37"/><ellipse cx="955.7" cy="441.6" rx="4.4" ry="3.5" fill="#9a5530" opacity="0.43"/><ellipse cx="956.2" cy="534.4" rx="3.7" ry="2.9" fill="#6a4030" opacity="0.45"/><ellipse cx="937.6" cy="494.1" rx="2.6" ry="2.1" fill="#4f3a2e" opacity="0.44"/><ellipse cx="967.1" cy="384.6" rx="3.9" ry="3.1" fill="#6e4e34" opacity="0.49"/><ellipse cx="983.2" cy="359.8" rx="1.7" ry="1.3" fill="#86603c" opacity="0.35"/><ellipse cx="987.4" cy="542.0" rx="4.0" ry="3.2" fill="#c09a48" opacity="0.50"/><ellipse cx="985.1" cy="541.7" rx="2.2" ry="1.8" fill="#6a4030" opacity="0.46"/><ellipse cx="987.0" cy="520.4" rx="3.9" ry="3.1" fill="#b07a3a" opacity="0.46"/><ellipse cx="956.7" cy="353.3" rx="2.0" ry="1.6" fill="#7a5a3a" opacity="0.34"/><ellipse cx="937.2" cy="518.9" rx="4.5" ry="3.6" fill="#8c3a28" opacity="0.33"/><ellipse cx="1013.9" cy="496.7" rx="3.6" ry="2.8" fill="#9a5530" opacity="0.35"/><ellipse cx="931.2" cy="429.3" rx="3.9" ry="3.1" fill="#4f3a2e" opacity="0.49"/><ellipse cx="1000.0" cy="543.3" rx="2.4" ry="1.9" fill="#9a4a2c" opacity="0.45"/><ellipse cx="972.3" cy="337.0" rx="2.3" ry="1.8" fill="#7a5a3a" opacity="0.49"/><ellipse cx="971.6" cy="305.3" rx="3.9" ry="3.1" fill="#7a5a3a" opacity="0.32"/><ellipse cx="984.6" cy="520.6" rx="4.2" ry="3.3" fill="#c09a48" opacity="0.35"/><ellipse cx="976.7" cy="335.7" rx="2.1" ry="1.7" fill="#7a5a3a" opacity="0.30"/><ellipse cx="997.7" cy="378.5" rx="3.2" ry="2.6" fill="#4a3c34" opacity="0.48"/><ellipse cx="1014.6" cy="347.5" rx="4.3" ry="3.4" fill="#4a3c34" opacity="0.36"/><ellipse cx="933.5" cy="450.3" rx="3.9" ry="3.1" fill="#4f3a2e" opacity="0.34"/><ellipse cx="925.3" cy="356.6" rx="3.3" ry="2.7" fill="#7a5a3a" opacity="0.26"/><ellipse cx="1029.0" cy="512.4" rx="3.0" ry="2.4" fill="#c09a48" opacity="0.31"/><ellipse cx="1022.0" cy="356.4" rx="1.8" ry="1.4" fill="#4a3c34" opacity="0.48"/><ellipse cx="1010.4" cy="538.3" rx="2.3" ry="1.8" fill="#9a4a2c" opacity="0.35"/><ellipse cx="1029.4" cy="382.6" rx="1.6" ry="1.3" fill="#7a5a3a" opacity="0.42"/><ellipse cx="1016.0" cy="403.9" rx="4.3" ry="3.5" fill="#7a5a3a" opacity="0.51"/><ellipse cx="991.1" cy="527.3" rx="3.6" ry="2.9" fill="#9a4a2c" opacity="0.33"/><ellipse cx="983.0" cy="452.4" rx="4.4" ry="3.5" fill="#4a3a32" opacity="0.37"/><ellipse cx="970.4" cy="324.5" rx="4.4" ry="3.5" fill="#4f3e32" opacity="0.30"/><ellipse cx="1023.7" cy="532.4" rx="1.7" ry="1.3" fill="#c09a48" opacity="0.52"/><ellipse cx="1012.4" cy="294.5" rx="3.9" ry="3.1" fill="#4a3c34" opacity="0.27"/><ellipse cx="937.6" cy="482.8" rx="4.3" ry="3.5" fill="#7a402c" opacity="0.43"/><ellipse cx="969.7" cy="455.6" rx="2.9" ry="2.3" fill="#7a402c" opacity="0.33"/><ellipse cx="935.4" cy="410.0" rx="2.0" ry="1.6" fill="#4f3e32" opacity="0.49"/><ellipse cx="1020.7" cy="519.3" rx="2.9" ry="2.3" fill="#8c3a28" opacity="0.49"/><ellipse cx="939.0" cy="503.5" rx="1.7" ry="1.4" fill="#4a3a32" opacity="0.51"/><ellipse cx="1018.0" cy="319.2" rx="2.8" ry="2.3" fill="#7a5a3a" opacity="0.53"/><ellipse cx="963.6" cy="287.8" rx="1.7" ry="1.4" fill="#6e4e34" opacity="0.35"/><ellipse cx="947.3" cy="312.8" rx="2.6" ry="2.1" fill="#6e4e34" opacity="0.32"/><ellipse cx="928.1" cy="471.9" rx="3.2" ry="2.5" fill="#4f3a2e" opacity="0.38"/><ellipse cx="938.1" cy="393.3" rx="2.2" ry="1.8" fill="#7a5a3a" opacity="0.33"/><ellipse cx="1012.7" cy="371.0" rx="2.0" ry="1.6" fill="#4a3c34" opacity="0.28"/><ellipse cx="971.3" cy="410.3" rx="2.0" ry="1.6" fill="#86603c" opacity="0.27"/><ellipse cx="1018.7" cy="459.8" rx="2.1" ry="1.7" fill="#9a5530" opacity="0.50"/><ellipse cx="934.9" cy="482.8" rx="4.4" ry="3.5" fill="#9a5530" opacity="0.55"/><ellipse cx="1029.8" cy="528.1" rx="1.8" ry="1.4" fill="#b07a3a" opacity="0.37"/><ellipse cx="939.5" cy="503.4" rx="4.4" ry="3.5" fill="#4f3a2e" opacity="0.54"/><ellipse cx="923.7" cy="496.7" rx="2.5" ry="2.0" fill="#4f3a2e" opacity="0.38"/><ellipse cx="1007.3" cy="533.0" rx="2.4" ry="1.9" fill="#b07a3a" opacity="0.38"/><ellipse cx="1020.5" cy="340.1" rx="3.2" ry="2.6" fill="#4f3e32" opacity="0.50"/><ellipse cx="978.3" cy="343.3" rx="2.0" ry="1.6" fill="#86603c" opacity="0.27"/><ellipse cx="931.4" cy="443.9" rx="3.0" ry="2.4" fill="#7a402c" opacity="0.30"/><ellipse cx="936.8" cy="460.2" rx="3.4" ry="2.7" fill="#4f3a2e" opacity="0.42"/><ellipse cx="943.8" cy="299.5" rx="3.7" ry="3.0" fill="#4a3c34" opacity="0.50"/><ellipse cx="1021.0" cy="419.9" rx="2.5" ry="2.0" fill="#6e4e34" opacity="0.50"/><ellipse cx="1015.4" cy="413.1" rx="1.5" ry="1.2" fill="#4a3c34" opacity="0.29"/><ellipse cx="993.9" cy="348.1" rx="3.2" ry="2.6" fill="#6e4e34" opacity="0.26"/><ellipse cx="997.8" cy="434.9" rx="4.1" ry="3.3" fill="#7a402c" opacity="0.41"/><ellipse cx="970.1" cy="419.2" rx="1.9" ry="1.5" fill="#4f3e32" opacity="0.49"/><ellipse cx="1015.5" cy="367.4" rx="3.6" ry="2.9" fill="#4a3c34" opacity="0.42"/><ellipse cx="1019.0" cy="359.6" rx="1.8" ry="1.5" fill="#4a3c34" opacity="0.38"/><ellipse cx="924.8" cy="496.0" rx="1.9" ry="1.5" fill="#4f3a2e" opacity="0.54"/><ellipse cx="946.2" cy="330.5" rx="1.8" ry="1.4" fill="#6e4e34" opacity="0.42"/><ellipse cx="1025.2" cy="287.2" rx="4.3" ry="3.4" fill="#4f3e32" opacity="0.33"/><ellipse cx="1012.4" cy="451.4" rx="2.9" ry="2.3" fill="#4f3a2e" opacity="0.46"/><ellipse cx="933.1" cy="513.3" rx="3.7" ry="2.9" fill="#9a4a2c" opacity="0.33"/><ellipse cx="972.2" cy="437.8" rx="3.8" ry="3.0" fill="#8a4a2e" opacity="0.29"/><ellipse cx="965.8" cy="318.4" rx="3.3" ry="2.6" fill="#4f3e32" opacity="0.29"/><ellipse cx="983.9" cy="480.6" rx="2.0" ry="1.6" fill="#8a4a2e" opacity="0.53"/><ellipse cx="964.0" cy="393.8" rx="4.0" ry="3.2" fill="#86603c" opacity="0.26"/><ellipse cx="1026.8" cy="295.8" rx="2.6" ry="2.1" fill="#4a3c34" opacity="0.32"/><ellipse cx="958.2" cy="397.9" rx="4.4" ry="3.6" fill="#6e4e34" opacity="0.49"/><ellipse cx="1013.5" cy="296.2" rx="3.1" ry="2.4" fill="#6e4e34" opacity="0.32"/><ellipse cx="967.6" cy="450.3" rx="2.6" ry="2.1" fill="#4a3a32" opacity="0.31"/><ellipse cx="957.0" cy="335.4" rx="3.5" ry="2.8" fill="#4f3e32" opacity="0.29"/><ellipse cx="1026.7" cy="488.6" rx="4.3" ry="3.4" fill="#8a4a2e" opacity="0.49"/><ellipse cx="1017.5" cy="517.3" rx="1.6" ry="1.3" fill="#c09a48" opacity="0.33"/><ellipse cx="995.3" cy="354.7" rx="3.1" ry="2.5" fill="#7a5a3a" opacity="0.44"/><ellipse cx="949.1" cy="420.4" rx="2.8" ry="2.2" fill="#8a4a2e" opacity="0.34"/><ellipse cx="955.0" cy="454.2" rx="1.9" ry="1.5" fill="#4a3a32" opacity="0.54"/><ellipse cx="1021.5" cy="521.8" rx="1.8" ry="1.4" fill="#c09a48" opacity="0.41"/><ellipse cx="938.0" cy="315.0" rx="1.9" ry="1.5" fill="#6e4e34" opacity="0.52"/><ellipse cx="984.4" cy="354.9" rx="3.7" ry="3.0" fill="#86603c" opacity="0.34"/><ellipse cx="971.0" cy="466.8" rx="2.2" ry="1.7" fill="#9a5530" opacity="0.31"/><ellipse cx="998.7" cy="404.6" rx="3.1" ry="2.5" fill="#86603c" opacity="0.39"/><ellipse cx="1010.4" cy="290.2" rx="2.5" ry="2.0" fill="#4f3e32" opacity="0.40"/><ellipse cx="963.4" cy="437.8" rx="1.5" ry="1.2" fill="#7a402c" opacity="0.30"/><ellipse cx="1024.8" cy="368.2" rx="2.5" ry="2.0" fill="#6e4e34" opacity="0.34"/><ellipse cx="1028.7" cy="360.6" rx="3.8" ry="3.1" fill="#4f3e32" opacity="0.42"/><ellipse cx="987.4" cy="374.6" rx="3.5" ry="2.8" fill="#86603c" opacity="0.37"/><ellipse cx="969.5" cy="477.6" rx="1.8" ry="1.5" fill="#4f3a2e" opacity="0.55"/><ellipse cx="995.2" cy="530.4" rx="2.8" ry="2.2" fill="#b07a3a" opacity="0.29"/><ellipse cx="943.9" cy="444.5" rx="2.3" ry="1.9" fill="#4a3a32" opacity="0.28"/><ellipse cx="1014.5" cy="527.3" rx="4.5" ry="3.6" fill="#b07a3a" opacity="0.49"/><ellipse cx="998.5" cy="525.3" rx="1.9" ry="1.5" fill="#9a4a2c" opacity="0.25"/><ellipse cx="1004.7" cy="437.8" rx="3.0" ry="2.4" fill="#4a3a32" opacity="0.29"/><ellipse cx="1013.8" cy="356.3" rx="3.4" ry="2.7" fill="#7a5a3a" opacity="0.36"/><ellipse cx="970.8" cy="403.8" rx="3.7" ry="2.9" fill="#6e4e34" opacity="0.36"/><ellipse cx="978.8" cy="440.4" rx="3.4" ry="2.8" fill="#8a4a2e" opacity="0.49"/><ellipse cx="1013.8" cy="414.9" rx="2.8" ry="2.3" fill="#4f3e32" opacity="0.41"/><ellipse cx="1008.7" cy="397.9" rx="2.6" ry="2.1" fill="#4f3e32" opacity="0.28"/><ellipse cx="1021.4" cy="368.1" rx="4.0" ry="3.2" fill="#4f3e32" opacity="0.54"/><ellipse cx="944.1" cy="395.4" rx="4.2" ry="3.4" fill="#7a5a3a" opacity="0.26"/><ellipse cx="949.7" cy="520.3" rx="2.4" ry="1.9" fill="#c09a48" opacity="0.48"/><ellipse cx="980.2" cy="547.6" rx="3.1" ry="2.4" fill="#c09a48" opacity="0.47"/><ellipse cx="968.4" cy="405.5" rx="1.6" ry="1.3" fill="#6e4e34" opacity="0.39"/><ellipse cx="923.1" cy="300.2" rx="2.2" ry="1.8" fill="#4a3c34" opacity="0.36"/><ellipse cx="965.3" cy="431.3" rx="3.2" ry="2.6" fill="#4f3a2e" opacity="0.54"/><ellipse cx="974.6" cy="399.1" rx="3.4" ry="2.7" fill="#86603c" opacity="0.35"/><ellipse cx="979.3" cy="499.0" rx="2.0" ry="1.6" fill="#7a402c" opacity="0.36"/><ellipse cx="930.1" cy="364.6" rx="2.0" ry="1.6" fill="#6e4e34" opacity="0.46"/><ellipse cx="1010.6" cy="545.4" rx="4.2" ry="3.3" fill="#6a4030" opacity="0.44"/><ellipse cx="978.6" cy="499.1" rx="2.1" ry="1.7" fill="#4f3a2e" opacity="0.37"/><ellipse cx="928.5" cy="432.3" rx="1.8" ry="1.5" fill="#4a3a32" opacity="0.55"/><ellipse cx="990.7" cy="293.3" rx="2.7" ry="2.2" fill="#7a5a3a" opacity="0.34"/><ellipse cx="996.6" cy="283.0" rx="2.4" ry="1.9" fill="#7a5a3a" opacity="0.43"/><ellipse cx="994.2" cy="334.3" rx="3.0" ry="2.4" fill="#86603c" opacity="0.42"/><ellipse cx="1016.1" cy="520.2" rx="3.0" ry="2.4" fill="#8c3a28" opacity="0.42"/><ellipse cx="966.4" cy="314.3" rx="2.0" ry="1.6" fill="#86603c" opacity="0.28"/><ellipse cx="932.8" cy="327.4" rx="3.1" ry="2.5" fill="#4a3c34" opacity="0.43"/><ellipse cx="1009.1" cy="298.5" rx="1.5" ry="1.2" fill="#86603c" opacity="0.35"/><ellipse cx="999.3" cy="376.1" rx="2.0" ry="1.6" fill="#6e4e34" opacity="0.44"/><ellipse cx="1014.8" cy="534.1" rx="1.7" ry="1.4" fill="#8c3a28" opacity="0.38"/><ellipse cx="963.7" cy="296.5" rx="4.2" ry="3.3" fill="#86603c" opacity="0.48"/><ellipse cx="926.7" cy="296.5" rx="2.2" ry="1.8" fill="#4f3e32" opacity="0.26"/><ellipse cx="1022.5" cy="509.4" rx="2.4" ry="2.0" fill="#6a4030" opacity="0.34"/><ellipse cx="987.1" cy="537.4" rx="3.0" ry="2.4" fill="#9a4a2c" opacity="0.32"/><ellipse cx="964.1" cy="473.1" rx="2.2" ry="1.7" fill="#7a402c" opacity="0.37"/><ellipse cx="998.9" cy="288.0" rx="4.1" ry="3.3" fill="#7a5a3a" opacity="0.30"/><ellipse cx="960.7" cy="331.6" rx="4.4" ry="3.5" fill="#6e4e34" opacity="0.37"/><ellipse cx="961.2" cy="371.1" rx="4.1" ry="3.3" fill="#6e4e34" opacity="0.37"/><ellipse cx="929.1" cy="314.8" rx="4.0" ry="3.2" fill="#6e4e34" opacity="0.42"/><ellipse cx="963.8" cy="406.2" rx="2.5" ry="2.0" fill="#4a3c34" opacity="0.26"/><ellipse cx="993.7" cy="372.8" rx="2.0" ry="1.6" fill="#4f3e32" opacity="0.28"/><ellipse cx="951.1" cy="504.1" rx="1.9" ry="1.5" fill="#9a5530" opacity="0.39"/><ellipse cx="1007.9" cy="345.9" rx="2.6" ry="2.1" fill="#4f3e32" opacity="0.47"/><ellipse cx="962.7" cy="536.9" rx="2.1" ry="1.7" fill="#6a4030" opacity="0.40"/><ellipse cx="946.5" cy="402.4" rx="1.9" ry="1.5" fill="#6e4e34" opacity="0.43"/><ellipse cx="969.6" cy="545.3" rx="3.1" ry="2.5" fill="#6a4030" opacity="0.43"/><ellipse cx="945.0" cy="514.1" rx="1.9" ry="1.5" fill="#c09a48" opacity="0.28"/><ellipse cx="1014.0" cy="477.8" rx="3.8" ry="3.0" fill="#8a4a2e" opacity="0.45"/><ellipse cx="983.3" cy="364.7" rx="2.7" ry="2.1" fill="#7a5a3a" opacity="0.46"/><ellipse cx="1005.8" cy="343.6" rx="2.1" ry="1.7" fill="#7a5a3a" opacity="0.27"/><ellipse cx="1020.7" cy="496.2" rx="3.8" ry="3.0" fill="#4f3a2e" opacity="0.27"/><ellipse cx="955.6" cy="342.2" rx="1.9" ry="1.5" fill="#4a3c34" opacity="0.33"/><ellipse cx="965.6" cy="523.8" rx="3.8" ry="3.1" fill="#8c3a28" opacity="0.53"/><ellipse cx="941.1" cy="379.5" rx="3.9" ry="3.1" fill="#6e4e34" opacity="0.52"/><ellipse cx="924.7" cy="469.2" rx="2.9" ry="2.3" fill="#9a5530" opacity="0.36"/><ellipse cx="989.9" cy="330.3" rx="1.8" ry="1.5" fill="#86603c" opacity="0.47"/><ellipse cx="999.0" cy="292.8" rx="1.6" ry="1.3" fill="#4f3e32" opacity="0.38"/><ellipse cx="1003.8" cy="323.5" rx="3.7" ry="3.0" fill="#86603c" opacity="0.34"/><ellipse cx="990.9" cy="329.8" rx="4.0" ry="3.2" fill="#86603c" opacity="0.40"/><ellipse cx="978.2" cy="528.2" rx="3.5" ry="2.8" fill="#c09a48" opacity="0.35"/><ellipse cx="922.1" cy="503.9" rx="3.8" ry="3.1" fill="#7a402c" opacity="0.52"/><ellipse cx="1016.5" cy="437.6" rx="3.6" ry="2.9" fill="#4f3a2e" opacity="0.45"/><ellipse cx="926.0" cy="366.7" rx="3.8" ry="3.1" fill="#6e4e34" opacity="0.47"/><ellipse cx="931.3" cy="466.8" rx="2.7" ry="2.1" fill="#4a3a32" opacity="0.50"/><ellipse cx="952.4" cy="305.9" rx="4.3" ry="3.5" fill="#4a3c34" opacity="0.38"/><ellipse cx="958.8" cy="415.8" rx="3.6" ry="2.9" fill="#4a3c34" opacity="0.40"/><ellipse cx="995.1" cy="336.8" rx="3.5" ry="2.8" fill="#4f3e32" opacity="0.40"/><ellipse cx="942.4" cy="535.3" rx="4.0" ry="3.2" fill="#c09a48" opacity="0.33"/><ellipse cx="981.0" cy="539.9" rx="3.4" ry="2.7" fill="#c09a48" opacity="0.33"/><ellipse cx="1026.1" cy="326.7" rx="2.5" ry="2.0" fill="#7a5a3a" opacity="0.31"/><ellipse cx="955.5" cy="318.3" rx="3.6" ry="2.9" fill="#4a3c34" opacity="0.32"/><ellipse cx="948.1" cy="419.1" rx="2.8" ry="2.3" fill="#6e4e34" opacity="0.46"/><ellipse cx="936.4" cy="470.3" rx="3.3" ry="2.6" fill="#4f3a2e" opacity="0.35"/><ellipse cx="1010.1" cy="427.8" rx="3.8" ry="3.0" fill="#4f3a2e" opacity="0.45"/><ellipse cx="938.7" cy="542.5" rx="4.0" ry="3.2" fill="#6a4030" opacity="0.50"/><ellipse cx="934.4" cy="359.0" rx="2.6" ry="2.1" fill="#4f3e32" opacity="0.26"/><ellipse cx="1018.7" cy="362.8" rx="1.8" ry="1.5" fill="#6e4e34" opacity="0.38"/><ellipse cx="934.2" cy="368.3" rx="2.9" ry="2.3" fill="#6e4e34" opacity="0.34"/><ellipse cx="982.2" cy="294.1" rx="2.9" ry="2.3" fill="#4a3c34" opacity="0.28"/><ellipse cx="999.5" cy="542.7" rx="3.2" ry="2.6" fill="#9a4a2c" opacity="0.44"/><ellipse cx="1025.3" cy="411.9" rx="3.9" ry="3.1" fill="#6e4e34" opacity="0.25"/><ellipse cx="1021.3" cy="453.4" rx="3.4" ry="2.7" fill="#7a402c" opacity="0.45"/><ellipse cx="930.4" cy="480.8" rx="1.6" ry="1.3" fill="#9a5530" opacity="0.50"/><ellipse cx="954.0" cy="331.4" rx="3.4" ry="2.7" fill="#4f3e32" opacity="0.28"/><ellipse cx="999.6" cy="364.6" rx="3.4" ry="2.7" fill="#4a3c34" opacity="0.31"/><ellipse cx="1011.1" cy="367.2" rx="2.6" ry="2.1" fill="#86603c" opacity="0.53"/><ellipse cx="1012.5" cy="349.4" rx="1.7" ry="1.3" fill="#7a5a3a" opacity="0.42"/><ellipse cx="989.8" cy="500.0" rx="3.6" ry="2.9" fill="#8a4a2e" opacity="0.53"/><ellipse cx="975.4" cy="414.9" rx="2.0" ry="1.6" fill="#6e4e34" opacity="0.43"/><ellipse cx="989.7" cy="319.7" rx="2.2" ry="1.7" fill="#4f3e32" opacity="0.38"/><ellipse cx="1026.7" cy="305.8" rx="1.6" ry="1.3" fill="#4a3c34" opacity="0.39"/><ellipse cx="945.6" cy="381.1" rx="1.6" ry="1.3" fill="#86603c" opacity="0.51"/><ellipse cx="1007.0" cy="395.2" rx="2.3" ry="1.9" fill="#7a5a3a" opacity="0.40"/><ellipse cx="967.5" cy="372.1" rx="2.8" ry="2.3" fill="#4f3e32" opacity="0.52"/><ellipse cx="939.8" cy="360.7" rx="2.8" ry="2.3" fill="#86603c" opacity="0.45"/><ellipse cx="983.3" cy="406.7" rx="3.1" ry="2.5" fill="#86603c" opacity="0.39"/><ellipse cx="1026.9" cy="523.7" rx="4.1" ry="3.3" fill="#6a4030" opacity="0.54"/><ellipse cx="988.9" cy="497.8" rx="1.7" ry="1.3" fill="#7a402c" opacity="0.43"/><ellipse cx="954.1" cy="433.9" rx="4.4" ry="3.5" fill="#9a5530" opacity="0.45"/><ellipse cx="936.8" cy="512.2" rx="3.1" ry="2.5" fill="#9a4a2c" opacity="0.50"/><ellipse cx="946.0" cy="478.8" rx="3.6" ry="2.9" fill="#4f3a2e" opacity="0.45"/><ellipse cx="962.2" cy="436.5" rx="2.7" ry="2.2" fill="#4a3a32" opacity="0.32"/><ellipse cx="969.7" cy="351.4" rx="2.2" ry="1.7" fill="#4f3e32" opacity="0.41"/><ellipse cx="934.1" cy="511.3" rx="2.3" ry="1.8" fill="#9a4a2c" opacity="0.31"/><ellipse cx="994.4" cy="470.6" rx="2.2" ry="1.7" fill="#9a5530" opacity="0.32"/><ellipse cx="983.9" cy="312.1" rx="3.0" ry="2.4" fill="#86603c" opacity="0.42"/><ellipse cx="1014.0" cy="462.7" rx="3.9" ry="3.1" fill="#4f3a2e" opacity="0.51"/><ellipse cx="981.5" cy="472.1" rx="3.8" ry="3.0" fill="#8a4a2e" opacity="0.44"/><ellipse cx="1025.7" cy="419.0" rx="2.9" ry="2.3" fill="#4a3c34" opacity="0.41"/><ellipse cx="1026.5" cy="333.0" rx="2.9" ry="2.3" fill="#7a5a3a" opacity="0.29"/><ellipse cx="1005.8" cy="297.3" rx="2.2" ry="1.8" fill="#6e4e34" opacity="0.26"/><ellipse cx="997.8" cy="536.2" rx="2.9" ry="2.3" fill="#9a4a2c" opacity="0.46"/><ellipse cx="968.0" cy="518.4" rx="3.4" ry="2.7" fill="#8c3a28" opacity="0.42"/><ellipse cx="1021.1" cy="513.6" rx="2.0" ry="1.6" fill="#b07a3a" opacity="0.49"/><ellipse cx="1001.5" cy="285.1" rx="2.3" ry="1.8" fill="#4f3e32" opacity="0.36"/><ellipse cx="1001.6" cy="534.2" rx="3.7" ry="2.9" fill="#9a4a2c" opacity="0.49"/><ellipse cx="960.2" cy="376.6" rx="2.5" ry="2.0" fill="#86603c" opacity="0.28"/><ellipse cx="1021.9" cy="461.6" rx="2.3" ry="1.8" fill="#4f3a2e" opacity="0.46"/><ellipse cx="924.3" cy="545.0" rx="2.8" ry="2.3" fill="#9a4a2c" opacity="0.40"/><ellipse cx="930.0" cy="350.7" rx="2.0" ry="1.6" fill="#6e4e34" opacity="0.51"/><ellipse cx="994.3" cy="504.4" rx="3.3" ry="2.6" fill="#7a402c" opacity="0.41"/><ellipse cx="996.5" cy="497.0" rx="4.3" ry="3.5" fill="#8a4a2e" opacity="0.26"/><ellipse cx="1029.4" cy="411.6" rx="3.0" ry="2.4" fill="#7a5a3a" opacity="0.49"/><ellipse cx="925.8" cy="330.5" rx="4.0" ry="3.2" fill="#86603c" opacity="0.37"/><ellipse cx="973.4" cy="324.1" rx="4.0" ry="3.2" fill="#4a3c34" opacity="0.32"/><ellipse cx="1025.5" cy="419.5" rx="2.6" ry="2.1" fill="#86603c" opacity="0.31"/><ellipse cx="1018.6" cy="438.7" rx="1.6" ry="1.3" fill="#4f3a2e" opacity="0.50"/><ellipse cx="1000.5" cy="370.1" rx="2.9" ry="2.3" fill="#6e4e34" opacity="0.34"/><ellipse cx="958.2" cy="410.6" rx="2.2" ry="1.7" fill="#4f3e32" opacity="0.39"/><ellipse cx="1028.5" cy="294.1" rx="1.9" ry="1.5" fill="#4f3e32" opacity="0.33"/><ellipse cx="951.5" cy="415.0" rx="2.3" ry="1.8" fill="#86603c" opacity="0.42"/><ellipse cx="985.1" cy="319.0" rx="3.6" ry="2.9" fill="#86603c" opacity="0.52"/><ellipse cx="932.3" cy="335.0" rx="2.8" ry="2.2" fill="#86603c" opacity="0.44"/><ellipse cx="961.2" cy="356.9" rx="3.9" ry="3.1" fill="#4f3e32" opacity="0.45"/><ellipse cx="954.8" cy="485.0" rx="3.7" ry="3.0" fill="#4a3a32" opacity="0.51"/><ellipse cx="948.5" cy="514.2" rx="3.6" ry="2.9" fill="#b07a3a" opacity="0.27"/><ellipse cx="958.4" cy="368.0" rx="4.5" ry="3.6" fill="#4a3c34" opacity="0.40"/><ellipse cx="1018.6" cy="497.3" rx="4.5" ry="3.6" fill="#4f3a2e" opacity="0.29"/><ellipse cx="922.8" cy="513.7" rx="2.9" ry="2.3" fill="#6a4030" opacity="0.37"/><ellipse cx="1005.4" cy="529.2" rx="3.3" ry="2.6" fill="#8c3a28" opacity="0.34"/><ellipse cx="955.3" cy="475.3" rx="3.2" ry="2.5" fill="#7a402c" opacity="0.27"/><ellipse cx="942.5" cy="528.0" rx="3.3" ry="2.6" fill="#b07a3a" opacity="0.42"/><ellipse cx="1028.6" cy="377.0" rx="3.8" ry="3.1" fill="#4a3c34" opacity="0.47"/><ellipse cx="1021.6" cy="505.1" rx="2.5" ry="2.0" fill="#8c3a28" opacity="0.33"/><ellipse cx="949.8" cy="288.1" rx="2.0" ry="1.6" fill="#6e4e34" opacity="0.32"/><ellipse cx="924.2" cy="294.7" rx="2.8" ry="2.3" fill="#86603c" opacity="0.33"/><ellipse cx="976.2" cy="308.5" rx="2.2" ry="1.8" fill="#7a5a3a" opacity="0.54"/><ellipse cx="986.9" cy="303.1" rx="3.9" ry="3.1" fill="#86603c" opacity="0.35"/><ellipse cx="936.8" cy="332.1" rx="3.1" ry="2.5" fill="#7a5a3a" opacity="0.44"/><ellipse cx="1021.7" cy="338.5" rx="2.5" ry="2.0" fill="#7a5a3a" opacity="0.44"/><ellipse cx="965.8" cy="462.6" rx="2.5" ry="2.0" fill="#8a4a2e" opacity="0.51"/><ellipse cx="1008.0" cy="305.2" rx="3.3" ry="2.7" fill="#4a3c34" opacity="0.55"/><ellipse cx="965.2" cy="532.1" rx="4.1" ry="3.3" fill="#9a4a2c" opacity="0.53"/><ellipse cx="982.9" cy="544.7" rx="1.7" ry="1.3" fill="#c09a48" opacity="0.46"/><ellipse cx="1012.2" cy="323.7" rx="1.6" ry="1.2" fill="#4f3e32" opacity="0.29"/><ellipse cx="1004.9" cy="305.9" rx="3.9" ry="3.2" fill="#4a3c34" opacity="0.35"/><ellipse cx="995.5" cy="512.3" rx="2.0" ry="1.6" fill="#c09a48" opacity="0.42"/><ellipse cx="946.8" cy="446.6" rx="3.9" ry="3.2" fill="#9a5530" opacity="0.48"/><ellipse cx="1005.8" cy="364.3" rx="3.8" ry="3.1" fill="#4a3c34" opacity="0.42"/><ellipse cx="961.0" cy="422.9" rx="2.3" ry="1.9" fill="#7a402c" opacity="0.25"/><ellipse cx="973.4" cy="456.3" rx="3.8" ry="3.1" fill="#7a402c" opacity="0.30"/><ellipse cx="989.9" cy="388.6" rx="4.4" ry="3.5" fill="#7a5a3a" opacity="0.44"/><ellipse cx="935.2" cy="426.5" rx="2.1" ry="1.7" fill="#4f3a2e" opacity="0.33"/><ellipse cx="987.5" cy="478.2" rx="4.2" ry="3.4" fill="#4f3a2e" opacity="0.41"/><ellipse cx="959.9" cy="470.8" rx="2.8" ry="2.3" fill="#9a5530" opacity="0.31"/><ellipse cx="1020.5" cy="521.7" rx="2.7" ry="2.1" fill="#8c3a28" opacity="0.35"/><ellipse cx="1019.6" cy="310.7" rx="3.7" ry="3.0" fill="#7a5a3a" opacity="0.49"/><ellipse cx="1020.7" cy="461.3" rx="2.6" ry="2.0" fill="#4f3a2e" opacity="0.42"/><ellipse cx="966.3" cy="526.5" rx="4.3" ry="3.5" fill="#8c3a28" opacity="0.26"/><ellipse cx="924.2" cy="470.7" rx="2.2" ry="1.8" fill="#7a402c" opacity="0.31"/><ellipse cx="1004.0" cy="453.0" rx="2.4" ry="1.9" fill="#9a5530" opacity="0.31"/><ellipse cx="983.5" cy="323.7" rx="4.1" ry="3.3" fill="#6e4e34" opacity="0.54"/><ellipse cx="936.7" cy="361.8" rx="1.8" ry="1.4" fill="#7a5a3a" opacity="0.40"/><ellipse cx="1018.2" cy="325.0" rx="3.5" ry="2.8" fill="#86603c" opacity="0.54"/><ellipse cx="944.9" cy="295.9" rx="3.8" ry="3.1" fill="#6e4e34" opacity="0.26"/><ellipse cx="1005.6" cy="398.8" rx="2.8" ry="2.2" fill="#4f3e32" opacity="0.55"/><ellipse cx="954.1" cy="288.5" rx="1.8" ry="1.5" fill="#7a5a3a" opacity="0.29"/><ellipse cx="954.7" cy="415.7" rx="2.6" ry="2.0" fill="#4f3e32" opacity="0.39"/><ellipse cx="964.9" cy="392.2" rx="3.4" ry="2.7" fill="#4a3c34" opacity="0.51"/><ellipse cx="1027.8" cy="290.8" rx="2.2" ry="1.8" fill="#7a5a3a" opacity="0.26"/><ellipse cx="976.5" cy="343.6" rx="2.8" ry="2.2" fill="#7a5a3a" opacity="0.47"/><ellipse cx="927.2" cy="519.8" rx="1.7" ry="1.4" fill="#9a4a2c" opacity="0.29"/><ellipse cx="974.6" cy="318.1" rx="2.8" ry="2.2" fill="#4f3e32" opacity="0.32"/><ellipse cx="980.4" cy="450.4" rx="3.1" ry="2.5" fill="#8a4a2e" opacity="0.41"/><ellipse cx="1012.7" cy="536.6" rx="1.7" ry="1.4" fill="#8c3a28" opacity="0.51"/><ellipse cx="1027.0" cy="341.6" rx="1.7" ry="1.4" fill="#4f3e32" opacity="0.25"/><ellipse cx="951.1" cy="539.0" rx="2.1" ry="1.7" fill="#9a4a2c" opacity="0.37"/><ellipse cx="982.1" cy="378.5" rx="1.5" ry="1.2" fill="#7a5a3a" opacity="0.45"/><ellipse cx="980.7" cy="428.0" rx="3.6" ry="2.9" fill="#7a402c" opacity="0.37"/><ellipse cx="956.4" cy="393.5" rx="4.4" ry="3.5" fill="#4a3c34" opacity="0.48"/><ellipse cx="1017.2" cy="495.8" rx="4.2" ry="3.4" fill="#8a4a2e" opacity="0.32"/><ellipse cx="976.1" cy="545.0" rx="3.6" ry="2.9" fill="#6a4030" opacity="0.55"/><ellipse cx="1011.2" cy="458.5" rx="1.8" ry="1.4" fill="#4a3a32" opacity="0.49"/><ellipse cx="1020.1" cy="295.2" rx="3.6" ry="2.9" fill="#6e4e34" opacity="0.46"/><ellipse cx="969.8" cy="459.7" rx="2.9" ry="2.3" fill="#4a3a32" opacity="0.25"/><ellipse cx="1002.6" cy="509.0" rx="3.0" ry="2.4" fill="#c09a48" opacity="0.41"/><ellipse cx="963.0" cy="501.4" rx="3.9" ry="3.1" fill="#9a5530" opacity="0.36"/><ellipse cx="928.9" cy="541.6" rx="2.3" ry="1.8" fill="#b07a3a" opacity="0.27"/><ellipse cx="1008.1" cy="458.7" rx="4.3" ry="3.4" fill="#7a402c" opacity="0.33"/><ellipse cx="1012.8" cy="510.1" rx="2.5" ry="2.0" fill="#c09a48" opacity="0.39"/><ellipse cx="945.9" cy="319.8" rx="4.3" ry="3.4" fill="#86603c" opacity="0.36"/><ellipse cx="944.1" cy="327.0" rx="2.6" ry="2.1" fill="#4f3e32" opacity="0.30"/><ellipse cx="993.5" cy="329.3" rx="4.3" ry="3.5" fill="#7a5a3a" opacity="0.35"/><ellipse cx="961.1" cy="511.7" rx="2.8" ry="2.2" fill="#6a4030" opacity="0.30"/><ellipse cx="949.2" cy="309.3" rx="2.6" ry="2.1" fill="#86603c" opacity="0.41"/><ellipse cx="970.9" cy="305.4" rx="2.7" ry="2.1" fill="#4a3c34" opacity="0.46"/><ellipse cx="970.5" cy="409.2" rx="3.9" ry="3.1" fill="#86603c" opacity="0.29"/><ellipse cx="995.5" cy="379.6" rx="3.1" ry="2.4" fill="#4f3e32" opacity="0.44"/><ellipse cx="978.5" cy="495.2" rx="2.3" ry="1.8" fill="#4a3a32" opacity="0.31"/><ellipse cx="983.6" cy="297.4" rx="2.0" ry="1.6" fill="#86603c" opacity="0.33"/><ellipse cx="957.0" cy="346.3" rx="4.0" ry="3.2" fill="#7a5a3a" opacity="0.41"/><ellipse cx="975.3" cy="305.6" rx="1.9" ry="1.5" fill="#6e4e34" opacity="0.44"/><ellipse cx="962.1" cy="293.7" rx="2.8" ry="2.3" fill="#6e4e34" opacity="0.26"/><ellipse cx="1003.3" cy="540.0" rx="2.8" ry="2.2" fill="#c09a48" opacity="0.49"/><ellipse cx="960.1" cy="384.5" rx="3.2" ry="2.6" fill="#86603c" opacity="0.31"/><ellipse cx="1026.9" cy="471.4" rx="2.6" ry="2.1" fill="#4f3a2e" opacity="0.35"/><ellipse cx="929.6" cy="483.1" rx="2.6" ry="2.1" fill="#4a3a32" opacity="0.37"/><ellipse cx="1023.1" cy="453.0" rx="3.9" ry="3.1" fill="#8a4a2e" opacity="0.43"/><ellipse cx="972.0" cy="404.9" rx="4.0" ry="3.2" fill="#4a3c34" opacity="0.55"/><ellipse cx="941.0" cy="299.3" rx="2.7" ry="2.2" fill="#4f3e32" opacity="0.40"/><ellipse cx="1011.1" cy="460.3" rx="3.7" ry="3.0" fill="#9a5530" opacity="0.41"/><ellipse cx="1022.0" cy="360.2" rx="2.5" ry="2.0" fill="#4a3c34" opacity="0.48"/><ellipse cx="934.8" cy="340.7" rx="1.7" ry="1.4" fill="#7a5a3a" opacity="0.28"/><ellipse cx="931.5" cy="482.4" rx="3.2" ry="2.6" fill="#8a4a2e" opacity="0.50"/><ellipse cx="943.6" cy="371.3" rx="4.1" ry="3.3" fill="#86603c" opacity="0.46"/><ellipse cx="967.1" cy="437.3" rx="4.5" ry="3.6" fill="#8a4a2e" opacity="0.51"/><ellipse cx="937.7" cy="370.9" rx="3.1" ry="2.4" fill="#7a5a3a" opacity="0.31"/><ellipse cx="980.2" cy="420.3" rx="1.8" ry="1.4" fill="#9a5530" opacity="0.33"/><ellipse cx="1014.8" cy="429.8" rx="3.0" ry="2.4" fill="#9a5530" opacity="0.45"/><ellipse cx="955.1" cy="348.1" rx="2.6" ry="2.1" fill="#4a3c34" opacity="0.51"/><ellipse cx="949.8" cy="335.7" rx="1.7" ry="1.3" fill="#86603c" opacity="0.45"/><ellipse cx="1022.7" cy="456.6" rx="3.6" ry="2.9" fill="#4f3a2e" opacity="0.36"/><ellipse cx="1008.6" cy="335.3" rx="4.3" ry="3.4" fill="#86603c" opacity="0.45"/><ellipse cx="1000.8" cy="284.3" rx="1.7" ry="1.4" fill="#86603c" opacity="0.50"/><ellipse cx="925.8" cy="340.4" rx="2.8" ry="2.3" fill="#4f3e32" opacity="0.46"/><ellipse cx="1008.7" cy="439.5" rx="2.9" ry="2.3" fill="#9a5530" opacity="0.31"/><ellipse cx="943.9" cy="329.9" rx="4.1" ry="3.3" fill="#7a5a3a" opacity="0.26"/><ellipse cx="1015.2" cy="301.1" rx="3.3" ry="2.6" fill="#4f3e32" opacity="0.25"/><ellipse cx="999.9" cy="478.1" rx="2.0" ry="1.6" fill="#4f3a2e" opacity="0.45"/><ellipse cx="994.9" cy="360.4" rx="2.1" ry="1.7" fill="#4f3e32" opacity="0.29"/><ellipse cx="1021.1" cy="337.0" rx="1.8" ry="1.4" fill="#7a5a3a" opacity="0.31"/><ellipse cx="931.9" cy="295.4" rx="2.2" ry="1.7" fill="#6e4e34" opacity="0.46"/><ellipse cx="969.8" cy="394.9" rx="4.1" ry="3.3" fill="#4f3e32" opacity="0.26"/><ellipse cx="1012.3" cy="360.1" rx="2.2" ry="1.8" fill="#86603c" opacity="0.49"/><ellipse cx="998.3" cy="473.3" rx="2.4" ry="1.9" fill="#7a402c" opacity="0.35"/><ellipse cx="1012.9" cy="322.4" rx="3.9" ry="3.1" fill="#4f3e32" opacity="0.37"/><ellipse cx="925.6" cy="383.1" rx="3.4" ry="2.7" fill="#4f3e32" opacity="0.45"/><ellipse cx="997.0" cy="334.7" rx="1.9" ry="1.6" fill="#4f3e32" opacity="0.38"/><ellipse cx="995.3" cy="312.4" rx="4.0" ry="3.2" fill="#7a5a3a" opacity="0.45"/><ellipse cx="944.7" cy="456.5" rx="3.1" ry="2.5" fill="#8a4a2e" opacity="0.34"/><ellipse cx="959.6" cy="481.6" rx="3.0" ry="2.4" fill="#8a4a2e" opacity="0.31"/><ellipse cx="952.2" cy="362.6" rx="3.3" ry="2.6" fill="#7a5a3a" opacity="0.31"/><ellipse cx="972.8" cy="486.2" rx="3.8" ry="3.0" fill="#4f3a2e" opacity="0.42"/><ellipse cx="954.4" cy="436.3" rx="1.8" ry="1.4" fill="#8a4a2e" opacity="0.35"/><ellipse cx="1024.0" cy="456.6" rx="1.7" ry="1.3" fill="#7a402c" opacity="0.36"/><ellipse cx="974.0" cy="369.7" rx="2.6" ry="2.1" fill="#7a5a3a" opacity="0.49"/><ellipse cx="954.2" cy="300.5" rx="3.2" ry="2.5" fill="#7a5a3a" opacity="0.47"/><ellipse cx="934.2" cy="324.9" rx="2.7" ry="2.1" fill="#7a5a3a" opacity="0.26"/><ellipse cx="977.4" cy="307.9" rx="3.4" ry="2.8" fill="#4f3e32" opacity="0.37"/><ellipse cx="1012.4" cy="302.3" rx="3.7" ry="2.9" fill="#4f3e32" opacity="0.36"/><ellipse cx="993.6" cy="305.9" rx="1.5" ry="1.2" fill="#4a3c34" opacity="0.34"/><ellipse cx="950.2" cy="310.3" rx="2.2" ry="1.8" fill="#4f3e32" opacity="0.40"/><ellipse cx="979.9" cy="313.3" rx="2.9" ry="2.3" fill="#4f3e32" opacity="0.42"/><ellipse cx="926.5" cy="350.2" rx="4.3" ry="3.5" fill="#6e4e34" opacity="0.37"/><ellipse cx="944.0" cy="315.8" rx="2.2" ry="1.8" fill="#86603c" opacity="0.40"/><ellipse cx="1018.2" cy="286.0" rx="4.3" ry="3.5" fill="#4a3c34" opacity="0.49"/><ellipse cx="997.8" cy="338.1" rx="3.7" ry="3.0" fill="#7a5a3a" opacity="0.48"/><ellipse cx="938.6" cy="352.3" rx="1.6" ry="1.3" fill="#4a3c34" opacity="0.44"/><ellipse cx="841.8" cy="529.5" rx="4.2" ry="2.1" fill="#8c3a28" opacity="0.64"/><ellipse cx="640.0" cy="524.3" rx="7.1" ry="3.5" fill="#6a4a35" opacity="0.35"/><ellipse cx="996.6" cy="537.1" rx="5.1" ry="2.5" fill="#b89a48" opacity="0.63"/><ellipse cx="916.7" cy="551.0" rx="3.9" ry="2.0" fill="#9a4a2c" opacity="0.59"/><ellipse cx="866.8" cy="523.6" rx="2.8" ry="1.4" fill="#7a5a3a" opacity="0.36"/><ellipse cx="764.3" cy="533.9" rx="3.2" ry="1.6" fill="#8c3a28" opacity="0.42"/><ellipse cx="887.5" cy="526.3" rx="7.4" ry="3.7" fill="#c0a050" opacity="0.67"/><ellipse cx="887.2" cy="553.5" rx="7.3" ry="3.6" fill="#9a4a2c" opacity="0.50"/><ellipse cx="932.1" cy="551.6" rx="7.7" ry="3.8" fill="#c0a050" opacity="0.61"/><ellipse cx="890.4" cy="554.1" rx="4.1" ry="2.1" fill="#7a4a2e" opacity="0.55"/><ellipse cx="961.4" cy="543.4" rx="8.0" ry="4.0" fill="#b89a48" opacity="0.49"/><ellipse cx="909.0" cy="552.0" rx="6.6" ry="3.3" fill="#c0a050" opacity="0.64"/><ellipse cx="697.5" cy="524.4" rx="6.5" ry="3.2" fill="#a8803e" opacity="0.58"/><ellipse cx="976.3" cy="537.6" rx="4.5" ry="2.3" fill="#c0a050" opacity="0.52"/><ellipse cx="479.2" cy="525.3" rx="7.3" ry="3.7" fill="#7a6048" opacity="0.49"/><ellipse cx="637.7" cy="526.7" rx="5.9" ry="2.9" fill="#8f7350" opacity="0.47"/><ellipse cx="942.9" cy="545.2" rx="4.4" ry="2.2" fill="#b89a48" opacity="0.70"/><ellipse cx="771.4" cy="530.4" rx="4.0" ry="2.0" fill="#8c3a28" opacity="0.48"/><ellipse cx="972.1" cy="536.2" rx="4.7" ry="2.3" fill="#9a4a2c" opacity="0.48"/><ellipse cx="970.6" cy="536.4" rx="5.6" ry="2.8" fill="#9a4a2c" opacity="0.65"/><ellipse cx="1012.2" cy="536.2" rx="2.9" ry="1.4" fill="#9a4a2c" opacity="0.39"/><ellipse cx="882.5" cy="547.4" rx="8.3" ry="4.2" fill="#7a4a2e" opacity="0.40"/><ellipse cx="891.9" cy="530.9" rx="5.1" ry="2.6" fill="#c0a050" opacity="0.51"/><ellipse cx="1006.4" cy="535.1" rx="6.5" ry="3.3" fill="#7a4a2e" opacity="0.68"/><ellipse cx="922.9" cy="523.3" rx="6.5" ry="3.2" fill="#7a4a2e" opacity="0.48"/><ellipse cx="1016.7" cy="523.2" rx="7.5" ry="3.7" fill="#b89a48" opacity="0.55"/><ellipse cx="652.1" cy="526.3" rx="8.1" ry="4.1" fill="#a8803e" opacity="0.40"/><ellipse cx="774.8" cy="537.4" rx="8.3" ry="4.1" fill="#8c3a28" opacity="0.63"/><ellipse cx="848.8" cy="535.8" rx="8.2" ry="4.1" fill="#a8803e" opacity="0.59"/><ellipse cx="625.4" cy="527.3" rx="6.0" ry="3.0" fill="#8f7350" opacity="0.63"/><ellipse cx="664.5" cy="526.5" rx="5.7" ry="2.8" fill="#8c3a28" opacity="0.41"/><ellipse cx="883.5" cy="527.7" rx="4.5" ry="2.3" fill="#b89a48" opacity="0.56"/><ellipse cx="1014.0" cy="551.3" rx="4.8" ry="2.4" fill="#9a4a2c" opacity="0.45"/><ellipse cx="969.1" cy="539.5" rx="6.3" ry="3.1" fill="#7a4a2e" opacity="0.49"/><ellipse cx="851.7" cy="535.1" rx="4.6" ry="2.3" fill="#7a5a3a" opacity="0.44"/><ellipse cx="938.8" cy="545.8" rx="7.2" ry="3.6" fill="#c0a050" opacity="0.37"/><ellipse cx="944.9" cy="537.1" rx="3.2" ry="1.6" fill="#7a4a2e" opacity="0.48"/><ellipse cx="983.8" cy="541.6" rx="4.4" ry="2.2" fill="#b89a48" opacity="0.44"/><ellipse cx="902.0" cy="522.6" rx="7.4" ry="3.7" fill="#c0a050" opacity="0.47"/><ellipse cx="996.4" cy="531.4" rx="4.2" ry="2.1" fill="#b89a48" opacity="0.66"/><ellipse cx="937.3" cy="548.8" rx="8.0" ry="4.0" fill="#9a4a2c" opacity="0.58"/><ellipse cx="1011.7" cy="545.7" rx="6.7" ry="3.3" fill="#7a4a2e" opacity="0.49"/><ellipse cx="996.6" cy="550.0" rx="4.7" ry="2.4" fill="#7a4a2e" opacity="0.52"/><ellipse cx="989.3" cy="532.3" rx="4.0" ry="2.0" fill="#b89a48" opacity="0.67"/><ellipse cx="507.4" cy="521.1" rx="6.0" ry="3.0" fill="#8f7350" opacity="0.55"/><ellipse cx="943.1" cy="551.8" rx="7.5" ry="3.7" fill="#9a4a2c" opacity="0.43"/><ellipse cx="945.8" cy="530.3" rx="3.5" ry="1.7" fill="#c0a050" opacity="0.66"/><ellipse cx="886.1" cy="553.0" rx="6.4" ry="3.2" fill="#c0a050" opacity="0.40"/><ellipse cx="624.0" cy="523.6" rx="6.2" ry="3.1" fill="#a08660" opacity="0.45"/><ellipse cx="589.3" cy="529.7" rx="3.3" ry="1.7" fill="#a08660" opacity="0.55"/><ellipse cx="967.5" cy="524.1" rx="2.9" ry="1.5" fill="#b89a48" opacity="0.39"/><ellipse cx="1004.2" cy="529.5" rx="5.4" ry="2.7" fill="#9a4a2c" opacity="0.51"/><ellipse cx="803.6" cy="522.3" rx="5.8" ry="2.9" fill="#7a5a3a" opacity="0.39"/><ellipse cx="914.3" cy="529.2" rx="7.5" ry="3.8" fill="#b89a48" opacity="0.43"/><ellipse cx="520.1" cy="525.4" rx="5.0" ry="2.5" fill="#a08660" opacity="0.49"/><ellipse cx="815.9" cy="528.4" rx="6.2" ry="3.1" fill="#8c3a28" opacity="0.49"/><ellipse cx="628.2" cy="528.6" rx="6.9" ry="3.5" fill="#a08660" opacity="0.36"/><ellipse cx="905.4" cy="551.8" rx="7.0" ry="3.5" fill="#c0a050" opacity="0.42"/><ellipse cx="893.1" cy="553.7" rx="4.5" ry="2.2" fill="#b89a48" opacity="0.67"/><ellipse cx="585.2" cy="521.5" rx="7.6" ry="3.8" fill="#a08660" opacity="0.61"/><ellipse cx="786.6" cy="533.3" rx="4.8" ry="2.4" fill="#8c3a28" opacity="0.37"/><ellipse cx="920.5" cy="538.7" rx="3.4" ry="1.7" fill="#b89a48" opacity="0.65"/><ellipse cx="765.8" cy="530.8" rx="5.0" ry="2.5" fill="#a8803e" opacity="0.44"/><ellipse cx="880.1" cy="536.0" rx="7.3" ry="3.7" fill="#7a4a2e" opacity="0.40"/><ellipse cx="477.2" cy="529.3" rx="6.1" ry="3.0" fill="#7a6048" opacity="0.36"/><ellipse cx="907.0" cy="529.0" rx="6.0" ry="3.0" fill="#b89a48" opacity="0.65"/><ellipse cx="1024.4" cy="549.0" rx="5.4" ry="2.7" fill="#7a4a2e" opacity="0.56"/><ellipse cx="701.7" cy="522.6" rx="5.4" ry="2.7" fill="#7a5a3a" opacity="0.61"/><ellipse cx="756.8" cy="525.1" rx="7.2" ry="3.6" fill="#7a5a3a" opacity="0.67"/><ellipse cx="930.0" cy="540.6" rx="6.3" ry="3.1" fill="#b89a48" opacity="0.60"/><ellipse cx="519.2" cy="530.3" rx="7.7" ry="3.9" fill="#8f7350" opacity="0.38"/><polyline points="925,299 935,297 945,301 955,302 965,297 975,294 985,291 995,288 1005,285 1015,284 1030,286" fill="none" stroke="#9c7a4c" stroke-width="3" opacity="0.3"/></g>
<g filter="url(#bl3)">
<polygon points="720,531 820,536 880,538 940,538 1040,536 1040,564 960,560 900,553 820,544 720,538" fill="#b39c55"/>
<polygon points="192,538 300,530 440,522 520,526 600,529 700,534 800,540 900,550 960,556 1040,558 1040,640 740,640 700,597 650,581 550,565 450,558 300,549" fill="url(#sand)"/>
</g>
<g filter="url(#bl2)">
<ellipse cx="640" cy="546" rx="140" ry="9" fill="#e6d6b2" opacity="0.5"/>
<ellipse cx="260" cy="590" rx="120" ry="20" fill="#acaa8c" opacity="0.3"/>
<ellipse cx="880" cy="585" rx="140" ry="7" fill="#e4dcc6" opacity="0.3"/>
<ellipse cx="560" cy="524" rx="70" ry="4" fill="#8f7350" opacity="0.6"/>
<ellipse cx="700" cy="527" rx="50" ry="5" fill="#8a6a45" opacity="0.6"/>
</g>
</svg>

<div class="win" style="left:94.3px;top:75.8px;width:836.2px;height:446.2px;"></div>
<div class="b" style="left:0;top:0;width:1024px;height:597px;clip-path:inset(0 93.5px 75px 0 round 0 0 8px 0);">
<div class="b" style="left:94.30px;top:75.80px;width:836.20px;height:28.20px;background:#f1f0ee;border-radius:7px 7px 0 0;"></div>
<div class="b" style="left:94.30px;top:104.00px;width:836.20px;height:1.00px;background:#e4e3e0;"></div>
<div class="b" style="left:104.00px;top:86.20px;width:8.00px;height:8.00px;background:#d8d7d4;border-radius:50%;"></div>
<div class="b" style="left:118.80px;top:86.20px;width:8.00px;height:8.00px;background:#d8d7d4;border-radius:50%;"></div>
<div class="b" style="left:133.60px;top:86.20px;width:8.00px;height:8.00px;background:#d8d7d4;border-radius:50%;"></div>
<div class="b" style="left:152.00px;top:81.00px;width:71.00px;height:18.60px;background:#e8e7e4;border-radius:10px;"></div>
<div class="b" style="left:152.50px;top:81.50px;width:43.50px;height:17.60px;background:#f5f4f2;border-radius:10px;box-shadow:0 0 0 0.5px #dddcd9;"></div>
<div class="t" style="left:162.00px;top:86.34px;font-size:9.4px;color:#3d3d3b;">Agent</div>
<div class="t" style="left:202.50px;top:86.68px;font-size:9.0px;color:#8f8e8b;">IDE</div>
<svg class="b" style="left:235px;top:84px;" width="14" height="12" viewBox="0 0 14 12"><rect x="1.5" y="1.5" width="11" height="9" rx="1.5" fill="none" stroke="#8a8986" stroke-width="1.1"/><line x1="5" y1="1.5" x2="5" y2="10.5" stroke="#8a8986" stroke-width="1.1"/></svg>
<div class="t" style="left:492.30px;top:86.07px;font-size:9.6px;color:#a09f9c;letter-spacing:0.25px;">agents-ui</div>
<svg class="b" style="left:847px;top:84px;" width="14" height="12" viewBox="0 0 14 12"><rect x="1.2" y="1.3" width="11" height="9.3" rx="1.5" fill="none" stroke="#8a8986" stroke-width="1.1"/><line x1="9" y1="1.3" x2="9" y2="10.6" stroke="#8a8986" stroke-width="1.1"/><path d="M6 4 L4.3 6 L6 8" fill="none" stroke="#8a8986" stroke-width="1"/></svg>
<svg class="b" style="left:866px;top:84px;" width="14" height="12" viewBox="0 0 14 12"><rect x="1.2" y="1.3" width="11.4" height="9.3" rx="1.5" fill="none" stroke="#8a8986" stroke-width="1.1"/><line x1="1.2" y1="7.5" x2="12.6" y2="7.5" stroke="#8a8986" stroke-width="1.1"/></svg>
<svg class="b" style="left:886px;top:84px;" width="14" height="12" viewBox="0 0 14 12"><rect x="1.2" y="1.3" width="11.4" height="9.3" rx="1.5" fill="none" stroke="#8a8986" stroke-width="1.1"/><rect x="9" y="1.3" width="3.6" height="9.3" fill="#c9c8c5" stroke="#8a8986" stroke-width="1.1"/></svg>
<svg class="b" style="left:906.6px;top:84px;" width="12" height="12" viewBox="0 0 12 12"><polygon points="11.60,6.00 9.97,7.65 9.96,9.96 7.65,9.97 6.00,11.60 4.35,9.97 2.04,9.96 2.03,7.65 0.40,6.00 2.03,4.35 2.04,2.04 4.35,2.03 6.00,0.40 7.65,2.03 9.96,2.04 9.97,4.35" fill="none" stroke="#8a8986" stroke-width="1" stroke-linejoin="round"/><circle cx="6" cy="6" r="1.8" fill="none" stroke="#8a8986" stroke-width="1"/></svg>
<div class="t" style="left:108.00px;top:116.81px;font-size:13.1px;color:#2e2e2d;-webkit-text-stroke:0.45px #2e2e2d;letter-spacing:0.22px;">Add -E option for extended regex</div>
<svg class="b" style="left:107px;top:133px;" width="10" height="10" viewBox="0 0 10 10"><circle cx="2.7" cy="8.1" r="1.5" fill="none" stroke="#a3a29f" stroke-width="0.9"/><circle cx="7.5" cy="3.0" r="1.3" fill="none" stroke="#a3a29f" stroke-width="0.9"/><path d="M2.7 1.4 V6.6 M7.5 4.3 C7.5 6.6 3.6 6.2 3.0 6.8" fill="none" stroke="#a3a29f" stroke-width="0.9"/></svg>
<div class="t" style="left:120.50px;top:134.45px;font-size:9.86px;color:#878683;">feat-parallel-search-oswR6</div>
<div class="t" style="left:242.60px;top:134.45px;font-size:9.86px;color:#a8a7a4;">by</div>
<div class="t" style="left:256.00px;top:134.45px;font-size:9.86px;color:#8f8e8b;letter-spacing:-0.4px;">GPT 5</div>
<div class="b" style="left:385.60px;top:128.80px;width:1.80px;height:1.80px;background:#8a8986;border-radius:50%;"></div>
<div class="b" style="left:389.10px;top:128.80px;width:1.80px;height:1.80px;background:#8a8986;border-radius:50%;"></div>
<div class="b" style="left:392.60px;top:128.80px;width:1.80px;height:1.80px;background:#8a8986;border-radius:50%;"></div>
<div class="b" style="left:406.30px;top:119.60px;width:57.30px;height:19.40px;background:#e1e0dd;border-radius:6px;"></div>
<div class="t" style="left:413.50px;top:125.30px;font-size:9.8px;color:#3a3a38;-webkit-text-stroke:0.2px #3a3a38;letter-spacing:-0.25px;">Create PR</div>
<div class="b" style="left:107.40px;top:155.60px;width:98.10px;height:37.50px;background:#f7f7f5;border:1px solid #e7e6e3;border-radius:6px;box-sizing:border-box;"></div>
<div class="t" style="left:114.00px;top:163.30px;font-size:9.45px;color:#3a3a38;-webkit-text-stroke:0.15px #3a3a38;">Composer</div>
<div class="t" style="left:114.00px;top:176.00px;font-size:9.45px;color:#8f8e8b;letter-spacing:0.2px;">2 files <span style="color:#cfceca">&middot;</span> <span style="color:#4c9a70;-webkit-text-stroke:0.2px #4c9a70">+137</span><span style="color:#c9607a;-webkit-text-stroke:0.2px #c9607a">-59</span></div>
<div class="b" style="left:212.40px;top:155.60px;width:97.80px;height:37.50px;background:#ebeae7;border:1.3px solid #8e8d8a;border-radius:6px;box-sizing:border-box;"></div>
<div class="t" style="left:219.00px;top:163.30px;font-size:9.45px;color:#3a3a38;-webkit-text-stroke:0.15px #3a3a38;">GPT-5 Codex</div>
<div class="t" style="left:219.00px;top:176.00px;font-size:9.45px;color:#8f8e8b;">Planning next m...</div>
<div class="b" style="left:317.30px;top:155.60px;width:97.60px;height:37.50px;background:#f7f7f5;border:1px solid #e7e6e3;border-radius:6px;box-sizing:border-box;"></div>
<div class="t" style="left:323.90px;top:163.30px;font-size:9.45px;color:#3a3a38;-webkit-text-stroke:0.15px #3a3a38;">Sonnet 4</div>
<div class="t" style="left:323.90px;top:176.00px;font-size:9.45px;color:#8f8e8b;letter-spacing:0.2px;">1 file <span style="color:#cfceca">&middot;</span> <span style="color:#4c9a70;-webkit-text-stroke:0.2px #4c9a70">+89</span><span style="color:#c9607a;-webkit-text-stroke:0.2px #c9607a">-4</span></div>
<div class="b" style="left:107.40px;top:203.00px;width:356.20px;height:43.00px;background:#f6f6f4;border:1px solid #e2e1de;border-radius:6px;box-sizing:border-box;overflow:hidden;"></div>
<div class="b" style="left:108.40px;top:204.00px;width:354.20px;height:19.80px;background:#ebeae7;border-radius:5px 5px 0 0;"></div>
<div class="b" style="left:108.40px;top:223.80px;width:354.20px;height:0.80px;background:#e2e1de;"></div>
<div class="t" style="left:114.30px;top:210.23px;font-size:10px;color:#3a3a38;letter-spacing:0.21px;">Add -E option for extended regex include updates to src/flags.rs, src/arg...</div>
<svg class="b" style="left:113px;top:229.6px;" width="12" height="10" viewBox="0 0 12 10"><circle cx="2.2" cy="2.3" r="1.5" fill="#a3a29f"/><circle cx="2.2" cy="7.4" r="1.5" fill="none" stroke="#a3a29f" stroke-width="0.9"/><line x1="5.2" y1="2.3" x2="10.5" y2="2.3" stroke="#a3a29f" stroke-width="1"/><line x1="5.2" y1="7.4" x2="10.5" y2="7.4" stroke="#a3a29f" stroke-width="1"/></svg>
<div class="t" style="left:128.90px;top:230.10px;font-size:9.8px;color:#3a3a38;">3 To-dos</div>
<div class="t" style="left:443.50px;top:230.36px;font-size:9.5px;color:#8f8e8b;">2/3</div>
<div class="t" style="left:117.60px;top:261.74px;font-size:10px;color:#343433;letter-spacing:0.21px;">All tests pass and the binary builds successfully. The -E option works as</div>
<div class="t" style="left:117.60px;top:276.59px;font-size:10px;color:#343433;letter-spacing:0.21px;">expected, allowing extended regular expressions (patterns like \d+, line|</div>
<div class="t" style="left:117.60px;top:291.44px;font-size:10px;color:#343433;letter-spacing:0.21px;">foo, etc.).</div>
<div class="b" style="left:117.40px;top:309.70px;width:335.60px;height:77.30px;border:1px solid #e6e5e2;border-radius:6px;box-sizing:border-box;"></div>
<svg class="b" style="left:124px;top:314px;" width="8" height="10" viewBox="0 0 8 10"><path d="M2.8 2 L5.8 5 L2.8 8" fill="none" stroke="#8f8e8b" stroke-width="1"/></svg>
<div class="t" style="left:137.20px;top:314.60px;font-size:9.45px;color:#a09f9c;">3 Files Edited</div>
<div class="t" style="left:198.40px;top:314.60px;font-size:9.45px;color:#3f7aa8;letter-spacing:-0.3px;">Review</div>
<div class="t" style="left:124.00px;top:334.36px;font-size:9.5px;color:#353534;-webkit-text-stroke:0.15px #353534;">Cargo.toml</div>
<div class="t" style="left:174.70px;top:334.27px;font-size:9.6px;color:#a7a6a3;">workspace/searcher</div>
<div class="t" style="right:577.60px;top:334.70px;font-size:9.45px;letter-spacing:0.45px;margin-right:-0.45px;-webkit-text-stroke:0.15px currentColor;"><span style="color:#4c9a70">+3</span><span style="color:#c9607a"></span></div>
<div class="t" style="left:124.00px;top:353.96px;font-size:9.5px;color:#353534;-webkit-text-stroke:0.15px #353534;">flags.rs</div>
<div class="t" style="left:159.20px;top:353.87px;font-size:9.6px;color:#a7a6a3;">workspace/searcher/src</div>
<div class="t" style="right:577.60px;top:354.30px;font-size:9.45px;letter-spacing:0.45px;margin-right:-0.45px;-webkit-text-stroke:0.15px currentColor;"><span style="color:#4c9a70">+6</span><span style="color:#c9607a">-3</span></div>
<div class="t" style="left:124.00px;top:373.46px;font-size:9.5px;color:#353534;-webkit-text-stroke:0.15px #353534;">args.rs</div>
<div class="t" style="left:157.50px;top:373.37px;font-size:9.6px;color:#a7a6a3;">workspace/searcher/src</div>
<div class="t" style="right:577.60px;top:373.80px;font-size:9.45px;letter-spacing:0.45px;margin-right:-0.45px;-webkit-text-stroke:0.15px currentColor;"><span style="color:#4c9a70">+7</span><span style="color:#c9607a">-2</span></div>
<div class="b" style="left:113.30px;top:430.10px;width:343.70px;height:29.90px;border:1px solid #e6e5e2;border-radius:5px 5px 0 0;box-sizing:border-box;background:#f6f6f4;"></div>
<svg class="b" style="left:121px;top:438px;" width="9" height="9" viewBox="0 0 9 9"><path d="M2 7 L6.8 2.2 M3.2 2.2 H6.8 V5.8" fill="none" stroke="#8f8e8b" stroke-width="0.95"/></svg>
<div class="t" style="left:133.70px;top:437.80px;font-size:9.8px;color:#737270;">3 Files</div>
<div class="t" style="left:357.90px;top:438.37px;font-size:9.6px;color:#8f8e8b;">Undo All</div>
<div class="b" style="left:401.50px;top:434.40px;width:48.80px;height:15.60px;background:#dfdedb;border-radius:4px;"></div>
<div class="t" style="left:406.90px;top:438.30px;font-size:9.8px;color:#333332;-webkit-text-stroke:0.25px #333332;letter-spacing:0.12px;">Apply All</div>
<div class="b" style="left:106.40px;top:454.00px;width:357.00px;height:58.50px;background:#f8f8f6;border:1px solid #e3e2df;border-radius:8px;box-sizing:border-box;box-shadow:0 1px 3px rgba(0,0,0,0.06);"></div>
<div class="t" style="left:114.20px;top:465.47px;font-size:10.2px;color:#a5a4a1;">Plan, @ for contexts, / for commands</div>
<div class="b" style="left:114.20px;top:490.00px;width:68.10px;height:16.00px;background:#e8e7e4;border-radius:8px;"></div>
<svg class="b" style="left:118px;top:493px;" width="15" height="10" viewBox="0 0 15 10"><path d="M7.5 5 C5.8 2.4 2 2 2 5 C2 8 5.8 7.6 7.5 5 C9.2 2.4 13 2 13 5 C13 8 9.2 7.6 7.5 5 Z" fill="none" stroke="#777673" stroke-width="0.95"/></svg>
<div class="t" style="left:135.90px;top:493.85px;font-size:10.1px;color:#5a5957;">Agent</div>
<svg class="b" style="left:166px;top:494px;" width="9" height="8" viewBox="0 0 9 8"><path d="M1.8 2.8 L4.5 5.5 L7.2 2.8" fill="none" stroke="#8f8e8b" stroke-width="0.95"/></svg>
<div class="t" style="left:187.80px;top:493.77px;font-size:10.2px;color:#676664;">Sonnet 4.5</div>
<svg class="b" style="left:242px;top:494px;" width="9" height="8" viewBox="0 0 9 8"><path d="M1.8 2.8 L4.5 5.5 L7.2 2.8" fill="none" stroke="#8f8e8b" stroke-width="0.95"/></svg>
<svg class="b" style="left:379px;top:492px;" width="12" height="12" viewBox="0 0 12 12"><path d="M8 6 A2 2 0 1 1 8 5.9 V7 C8 8.4 10.6 8.4 10.6 6 A4.6 4.6 0 1 0 8.4 10" fill="none" stroke="#9a9996" stroke-width="0.95"/></svg>
<svg class="b" style="left:398.5px;top:492px;" width="12" height="12" viewBox="0 0 12 12"><circle cx="6" cy="6" r="5" fill="none" stroke="#9a9996" stroke-width="1"/><ellipse cx="6" cy="6" rx="2.3" ry="5" fill="none" stroke="#9a9996" stroke-width="0.9"/><line x1="1" y1="4.3" x2="11" y2="4.3" stroke="#9a9996" stroke-width="0.8"/><line x1="1" y1="7.7" x2="11" y2="7.7" stroke="#9a9996" stroke-width="0.8"/></svg>
<svg class="b" style="left:419.5px;top:492.5px;" width="13" height="11" viewBox="0 0 13 11"><rect x="1.2" y="1" width="10.6" height="8.8" rx="1.2" fill="none" stroke="#8f8e8b" stroke-width="1"/><path d="M1.8 9.2 L4.5 6.2 L6.6 7.6 L8.6 5.6 L11.2 9.2 Z" fill="#8f8e8b"/><circle cx="4" cy="3.8" r="1" fill="#8f8e8b"/></svg>
<div class="b" style="left:440.60px;top:489.80px;width:16.40px;height:16.20px;background:#262625;border-radius:50%;"></div>
<svg class="b" style="left:444.7px;top:492px;" width="8" height="12" viewBox="0 0 8 12"><rect x="2.6" y="1" width="2.8" height="5.6" rx="1.4" fill="#f4f4f2"/><path d="M1.3 4.8 C1.3 8.2 6.7 8.2 6.7 4.8 M4 7.6 V10 M2.3 10.2 H5.7" fill="none" stroke="#f4f4f2" stroke-width="0.9"/></svg>
<div class="b" style="left:476.20px;top:104.50px;width:1.00px;height:417.50px;background:#e6e5e2;"></div>
<div class="b" style="left:477.20px;top:105.00px;width:453.30px;height:25.80px;background:#efeeec;"></div>
<div class="b" style="left:591.00px;top:130.30px;width:339.50px;height:0.80px;background:#e4e3e0;"></div>
<div class="b" style="left:477.20px;top:105.00px;width:113.80px;height:26.10px;background:#f6f6f4;"></div>
<div class="b" style="left:590.50px;top:105.00px;width:0.80px;height:26.00px;background:#e4e3e0;"></div>
<div class="t" style="left:486.60px;top:113.29px;font-size:9.7px;color:#6d6c69;letter-spacing:0.2px;">Review: Add -E...</div>
<svg class="b" style="left:575.5px;top:113.0px;" width="9" height="9" viewBox="0 0 9 9"><path d="M1 1 L8 8 M8 1 L1 8" stroke="#a09f9c" stroke-width="1"/></svg>
<div class="b" style="left:908.70px;top:117.10px;width:1.60px;height:1.60px;background:#8a8986;border-radius:50%;"></div>
<div class="b" style="left:911.90px;top:117.10px;width:1.60px;height:1.60px;background:#8a8986;border-radius:50%;"></div>
<div class="b" style="left:915.10px;top:117.10px;width:1.60px;height:1.60px;background:#8a8986;border-radius:50%;"></div>
<div class="t" style="left:488.70px;top:138.83px;font-size:10.0px;color:#3a3a38;-webkit-text-stroke:0.15px #3a3a38;">Pending</div>
<div class="t" style="left:531.30px;top:138.92px;font-size:9.9px;color:#6d6c69;">2 Files</div>
<div class="t" style="left:566.40px;top:139.17px;font-size:9.6px;color:#4c9a70;letter-spacing:-0.3px;">+12</div>
<div class="t" style="left:587.30px;top:139.26px;font-size:9.5px;color:#c9607a;">-2</div>
<div class="t" style="left:819.00px;top:139.09px;font-size:9.7px;color:#7d7c79;">Undo All</div>
<div class="b" style="left:862.60px;top:135.80px;width:58.30px;height:15.10px;background:#2b6aa6;border-radius:4px;"></div>
<div class="t" style="left:867.50px;top:139.09px;font-size:9.7px;color:#ffffff;-webkit-text-stroke:0.15px #ffffff;">Apply All</div>
<svg class="b" style="left:906px;top:139px;" width="10" height="9" viewBox="0 0 10 9"><path d="M8.5 1.5 V4.8 H2.2 M4.2 2.8 L2 4.8 L4.2 6.8" fill="none" stroke="#ffffff" stroke-width="1"/></svg>
<div class="b" style="left:477.20px;top:155.80px;width:453.30px;height:0.80px;background:#e6e5e2;"></div>
<div class="b" style="left:477.20px;top:179.20px;width:453.30px;height:0.80px;background:#e6e5e2;"></div>
<div class="t" style="left:488.70px;top:163.57px;font-size:9.6px;color:#3a3a38;-webkit-text-stroke:0.3px #3a3a38;">args.rs</div>
<div class="t" style="left:523.80px;top:163.57px;font-size:9.6px;color:#a7a6a3;">workspace/searcher/src</div>
<div class="t" style="left:631.30px;top:163.57px;font-size:9.6px;-webkit-text-stroke:0.15px currentColor;"><span style="color:#4c9a70">+7</span><span style="color:#c9607a">-2</span></div>
<div class="t" style="right:522.60px;top:188.27px;font-size:9.6px;color:#93928f;">2</div>
<div class="t" style="left:533.20px;top:188.60px;font-size:9.33px;font-family:'Liberation Mono', monospace;color:#585b72;"><span style="color:#555870">pub </span><span style="color:#3d8190">enum Flag </span><span style="color:#8b8ea3">{</span></div>
<div class="b" style="left:521.00px;top:199.95px;width:409.50px;height:14.80px;background:#f3e2e4;"></div>
<div class="b" style="left:521.00px;top:199.95px;width:1.30px;height:14.80px;background:#d4728a;"></div>
<div class="t" style="right:522.60px;top:203.02px;font-size:9.6px;color:#93928f;">3</div>
<div class="t" style="left:508.30px;top:203.12px;font-size:9.6px;color:#c9607a;">−</div>
<div class="t" style="left:533.20px;top:203.35px;font-size:9.33px;font-family:'Liberation Mono', monospace;color:#585b72;">    <span style="color:#555870">Help,</span></div>
<div class="t" style="right:522.60px;top:217.77px;font-size:9.6px;color:#93928f;">4</div>
<div class="t" style="left:533.20px;top:218.10px;font-size:9.33px;font-family:'Liberation Mono', monospace;color:#585b72;">    <span style="color:#555870">Version,</span></div>
<div class="b" style="left:521.00px;top:229.45px;width:409.50px;height:14.80px;background:#dde9e3;"></div>
<div class="b" style="left:521.00px;top:229.45px;width:1.30px;height:14.80px;background:#5aa883;"></div>
<div class="t" style="right:522.60px;top:232.52px;font-size:9.6px;color:#93928f;">5</div>
<div class="t" style="left:508.30px;top:232.62px;font-size:9.6px;color:#4c9a70;">+</div>
<div class="t" style="left:528.20px;top:234.03px;font-size:9.0px;color:#3c7f66;-webkit-text-stroke:0.1px #3c7f66;font-family:'Liberation Mono', monospace;">+</div>
<div class="t" style="left:533.20px;top:232.85px;font-size:9.33px;font-family:'Liberation Mono', monospace;color:#585b72;">    <span style="color:#8e8f93">/// Enable extended regular expressions</span></div>
<div class="b" style="left:521.00px;top:244.20px;width:409.50px;height:14.80px;background:#dde9e3;"></div>
<div class="b" style="left:521.00px;top:244.20px;width:1.30px;height:14.80px;background:#5aa883;"></div>
<div class="t" style="right:522.60px;top:247.27px;font-size:9.6px;color:#93928f;">6</div>
<div class="t" style="left:508.30px;top:247.37px;font-size:9.6px;color:#4c9a70;">+</div>
<div class="t" style="left:528.20px;top:248.78px;font-size:9.0px;color:#3c7f66;-webkit-text-stroke:0.1px #3c7f66;font-family:'Liberation Mono', monospace;">+</div>
<div class="t" style="left:533.20px;top:247.60px;font-size:9.33px;font-family:'Liberation Mono', monospace;color:#585b72;">    <span style="color:#555870">ExtendedRegex,</span></div>
<div class="t" style="right:522.60px;top:262.02px;font-size:9.6px;color:#93928f;">7</div>
<div class="t" style="left:533.20px;top:262.35px;font-size:9.33px;font-family:'Liberation Mono', monospace;color:#585b72;"><span style="color:#8b8ea3">}</span></div>
<svg class="b" style="left:519.5px;top:276px;" width="8" height="11" viewBox="0 0 8 11"><path d="M1.2 4 L4 1.5 L6.8 4 M1.2 7 L4 9.5 L6.8 7" fill="none" stroke="#a3a29f" stroke-width="0.9"/></svg>
<div class="t" style="left:531.00px;top:277.34px;font-size:9.4px;color:#a3a29f;">15 Lines hidden</div>
<div class="t" style="right:522.60px;top:291.52px;font-size:9.6px;color:#93928f;">23</div>
<div class="t" style="left:533.20px;top:291.85px;font-size:9.33px;font-family:'Liberation Mono', monospace;color:#585b72;">        <span style="color:#3d8190">.</span><span style="color:#d0788a">arg</span><span style="color:#8b8ea3">(</span><span style="color:#555870">clap::Arg::</span><span style="color:#3d8190">new</span><span style="color:#8b8ea3">(</span><span style="color:#dca254">&quot;version&quot;</span><span style="color:#8b8ea3">).</span><span style="color:#d0788a">short</span><span style="color:#8b8ea3">(</span><span style="color:#dca254">&#x27;V&#x27;</span><span style="color:#8b8ea3">).</span><span style="color:#d0788a">long</span><span style="color:#8b8ea3">(</span><span style="color:#dca254">&quot;version&quot;</span><span style="color:#8b8ea3">))</span></div>
<div class="b" style="left:521.00px;top:303.20px;width:409.50px;height:14.80px;background:#dde9e3;"></div>
<div class="b" style="left:521.00px;top:303.20px;width:1.30px;height:14.80px;background:#5aa883;"></div>
<div class="t" style="right:522.60px;top:306.27px;font-size:9.6px;color:#93928f;">24</div>
<div class="t" style="left:508.30px;top:306.37px;font-size:9.6px;color:#4c9a70;">+</div>
<div class="t" style="left:528.20px;top:307.78px;font-size:9.0px;color:#3c7f66;-webkit-text-stroke:0.1px #3c7f66;font-family:'Liberation Mono', monospace;">+</div>
<div class="t" style="left:533.20px;top:306.60px;font-size:9.33px;font-family:'Liberation Mono', monospace;color:#585b72;">        <span style="color:#3d8190">.</span><span style="color:#d0788a">arg</span><span style="color:#8b8ea3">(</span><span style="color:#555870">clap::Arg::</span><span style="color:#3d8190">new</span><span style="color:#8b8ea3">(</span><span style="color:#dca254">&quot;extended-regex&quot;</span><span style="color:#8b8ea3">)</span></div>
<div class="b" style="left:521.00px;top:317.95px;width:409.50px;height:14.80px;background:#dde9e3;"></div>
<div class="b" style="left:521.00px;top:317.95px;width:1.30px;height:14.80px;background:#5aa883;"></div>
<div class="t" style="right:522.60px;top:321.02px;font-size:9.6px;color:#93928f;">25</div>
<div class="t" style="left:508.30px;top:321.12px;font-size:9.6px;color:#4c9a70;">+</div>
<div class="t" style="left:528.20px;top:322.53px;font-size:9.0px;color:#3c7f66;-webkit-text-stroke:0.1px #3c7f66;font-family:'Liberation Mono', monospace;">+</div>
<div class="t" style="left:533.20px;top:321.35px;font-size:9.33px;font-family:'Liberation Mono', monospace;color:#585b72;">            <span style="color:#3d8190">.</span><span style="color:#d0788a">short</span><span style="color:#8b8ea3">(</span><span style="color:#dca254">&#x27;E&#x27;</span><span style="color:#8b8ea3">)</span></div>
<div class="b" style="left:521.00px;top:332.70px;width:409.50px;height:14.80px;background:#dde9e3;"></div>
<div class="b" style="left:521.00px;top:332.70px;width:1.30px;height:14.80px;background:#5aa883;"></div>
<div class="t" style="right:522.60px;top:335.77px;font-size:9.6px;color:#93928f;">26</div>
<div class="t" style="left:508.30px;top:335.87px;font-size:9.6px;color:#4c9a70;">+</div>
<div class="t" style="left:528.20px;top:337.28px;font-size:9.0px;color:#3c7f66;-webkit-text-stroke:0.1px #3c7f66;font-family:'Liberation Mono', monospace;">+</div>
<div class="t" style="left:533.20px;top:336.10px;font-size:9.33px;font-family:'Liberation Mono', monospace;color:#585b72;">            <span style="color:#3d8190">.</span><span style="color:#d0788a">long</span><span style="color:#8b8ea3">(</span><span style="color:#dca254">&quot;extended-regex&quot;</span><span style="color:#8b8ea3">)</span></div>
<div class="b" style="left:521.00px;top:347.45px;width:409.50px;height:14.80px;background:#dde9e3;"></div>
<div class="b" style="left:521.00px;top:347.45px;width:1.30px;height:14.80px;background:#5aa883;"></div>
<div class="t" style="right:522.60px;top:350.52px;font-size:9.6px;color:#93928f;">27</div>
<div class="t" style="left:508.30px;top:350.62px;font-size:9.6px;color:#4c9a70;">+</div>
<div class="t" style="left:528.20px;top:352.03px;font-size:9.0px;color:#3c7f66;-webkit-text-stroke:0.1px #3c7f66;font-family:'Liberation Mono', monospace;">+</div>
<div class="t" style="left:533.20px;top:350.85px;font-size:9.33px;font-family:'Liberation Mono', monospace;color:#585b72;">            <span style="color:#3d8190">.</span><span style="color:#d0788a">help</span><span style="color:#8b8ea3">(</span><span style="color:#dca254">&quot;Use extended regular expressions for the pattern&quot;</span><span style="color:#8b8ea3">))</span></div>
<div class="t" style="right:522.60px;top:365.27px;font-size:9.6px;color:#93928f;">28</div>
<div class="t" style="left:533.20px;top:365.60px;font-size:9.33px;font-family:'Liberation Mono', monospace;color:#585b72;"><span style="color:#8b8ea3">}</span></div>
<div class="b" style="left:477.20px;top:377.60px;width:453.30px;height:0.80px;background:#e6e5e2;"></div>
<div class="t" style="left:488.70px;top:385.17px;font-size:9.6px;color:#3a3a38;-webkit-text-stroke:0.3px #3a3a38;">flags.rs</div>
<div class="t" style="left:525.40px;top:385.17px;font-size:9.6px;color:#a7a6a3;">workspace/searcher/src</div>
<div class="t" style="left:633px;top:385.17px;font-size:9.6px;-webkit-text-stroke:0.15px currentColor;"><span style="color:#4c9a70">+6</span><span style="color:#c9607a">-3</span></div>
<div class="b" style="left:477.20px;top:400.40px;width:453.30px;height:0.80px;background:#e6e5e2;"></div>
<div class="t" style="right:522.60px;top:409.27px;font-size:9.6px;color:#93928f;">11</div>
<div class="t" style="left:533.20px;top:409.60px;font-size:9.33px;font-family:'Liberation Mono', monospace;color:#585b72;"><span style="color:#555870">pub struct </span><span style="color:#4f5878">SearchConfig </span><span style="color:#8b8ea3">{</span></div>
<div class="b" style="left:521.00px;top:420.95px;width:409.50px;height:14.80px;background:#f3e2e4;"></div>
<div class="b" style="left:521.00px;top:420.95px;width:1.30px;height:14.80px;background:#d4728a;"></div>
<div class="t" style="right:522.60px;top:424.02px;font-size:9.6px;color:#93928f;">12</div>
<div class="t" style="left:508.30px;top:424.12px;font-size:9.6px;color:#c9607a;">−</div>
<div class="t" style="left:533.20px;top:424.35px;font-size:9.33px;font-family:'Liberation Mono', monospace;color:#585b72;">   <span style="color:#555870">pub </span><span style="color:#d0788a">use_regex</span><span style="color:#555870">: bool,</span></div>
<div class="t" style="right:522.60px;top:438.77px;font-size:9.6px;color:#93928f;">13</div>
<div class="t" style="left:533.20px;top:439.10px;font-size:9.33px;font-family:'Liberation Mono', monospace;color:#585b72;">   <span style="color:#8e8f93">/// When true, interpret the pattern using *extended* regular expressions</span></div>
<div class="b" style="left:521.00px;top:450.45px;width:409.50px;height:14.80px;background:#dde9e3;"></div>
<div class="b" style="left:521.00px;top:450.45px;width:1.30px;height:14.80px;background:#5aa883;"></div>
<div class="t" style="right:522.60px;top:453.52px;font-size:9.6px;color:#93928f;">14</div>
<div class="t" style="left:508.30px;top:453.62px;font-size:9.6px;color:#4c9a70;">+</div>
<div class="t" style="left:533.20px;top:453.85px;font-size:9.33px;font-family:'Liberation Mono', monospace;color:#585b72;">   <span style="color:#8e8f93">/// (set by `-E` / `--extended-regex`).</span></div>
<div class="b" style="left:521.00px;top:465.20px;width:409.50px;height:14.80px;background:#dde9e3;"></div>
<div class="b" style="left:521.00px;top:465.20px;width:1.30px;height:14.80px;background:#5aa883;"></div>
<div class="t" style="right:522.60px;top:468.27px;font-size:9.6px;color:#93928f;">15</div>
<div class="t" style="left:508.30px;top:468.37px;font-size:9.6px;color:#4c9a70;">+</div>
<div class="t" style="left:533.20px;top:468.60px;font-size:9.33px;font-family:'Liberation Mono', monospace;color:#585b72;">   <span style="color:#555870">pub </span><span style="color:#d0788a">use_regex</span><span style="color:#555870">: bool,</span></div>
<div class="t" style="right:522.60px;top:483.02px;font-size:9.6px;color:#93928f;">16</div>
<div class="t" style="left:533.20px;top:483.35px;font-size:9.33px;font-family:'Liberation Mono', monospace;color:#585b72;">    <span style="color:#555870">pub </span><span style="color:#d0788a">verbose</span><span style="color:#555870">: bool,</span></div>
<div class="t" style="right:522.60px;top:497.77px;font-size:9.6px;color:#93928f;">17</div>
<div class="t" style="left:529.20px;top:498.10px;font-size:9.33px;font-family:'Liberation Mono', monospace;color:#585b72;"><span style="color:#8b8ea3">}</span></div>
<div class="t" style="right:522.60px;top:512.52px;font-size:9.6px;color:#93928f;">18</div>
<div class="t" style="left:533.20px;top:512.85px;font-size:9.33px;font-family:'Liberation Mono', monospace;color:#585b72;"></div>
</div>
</body></html>
